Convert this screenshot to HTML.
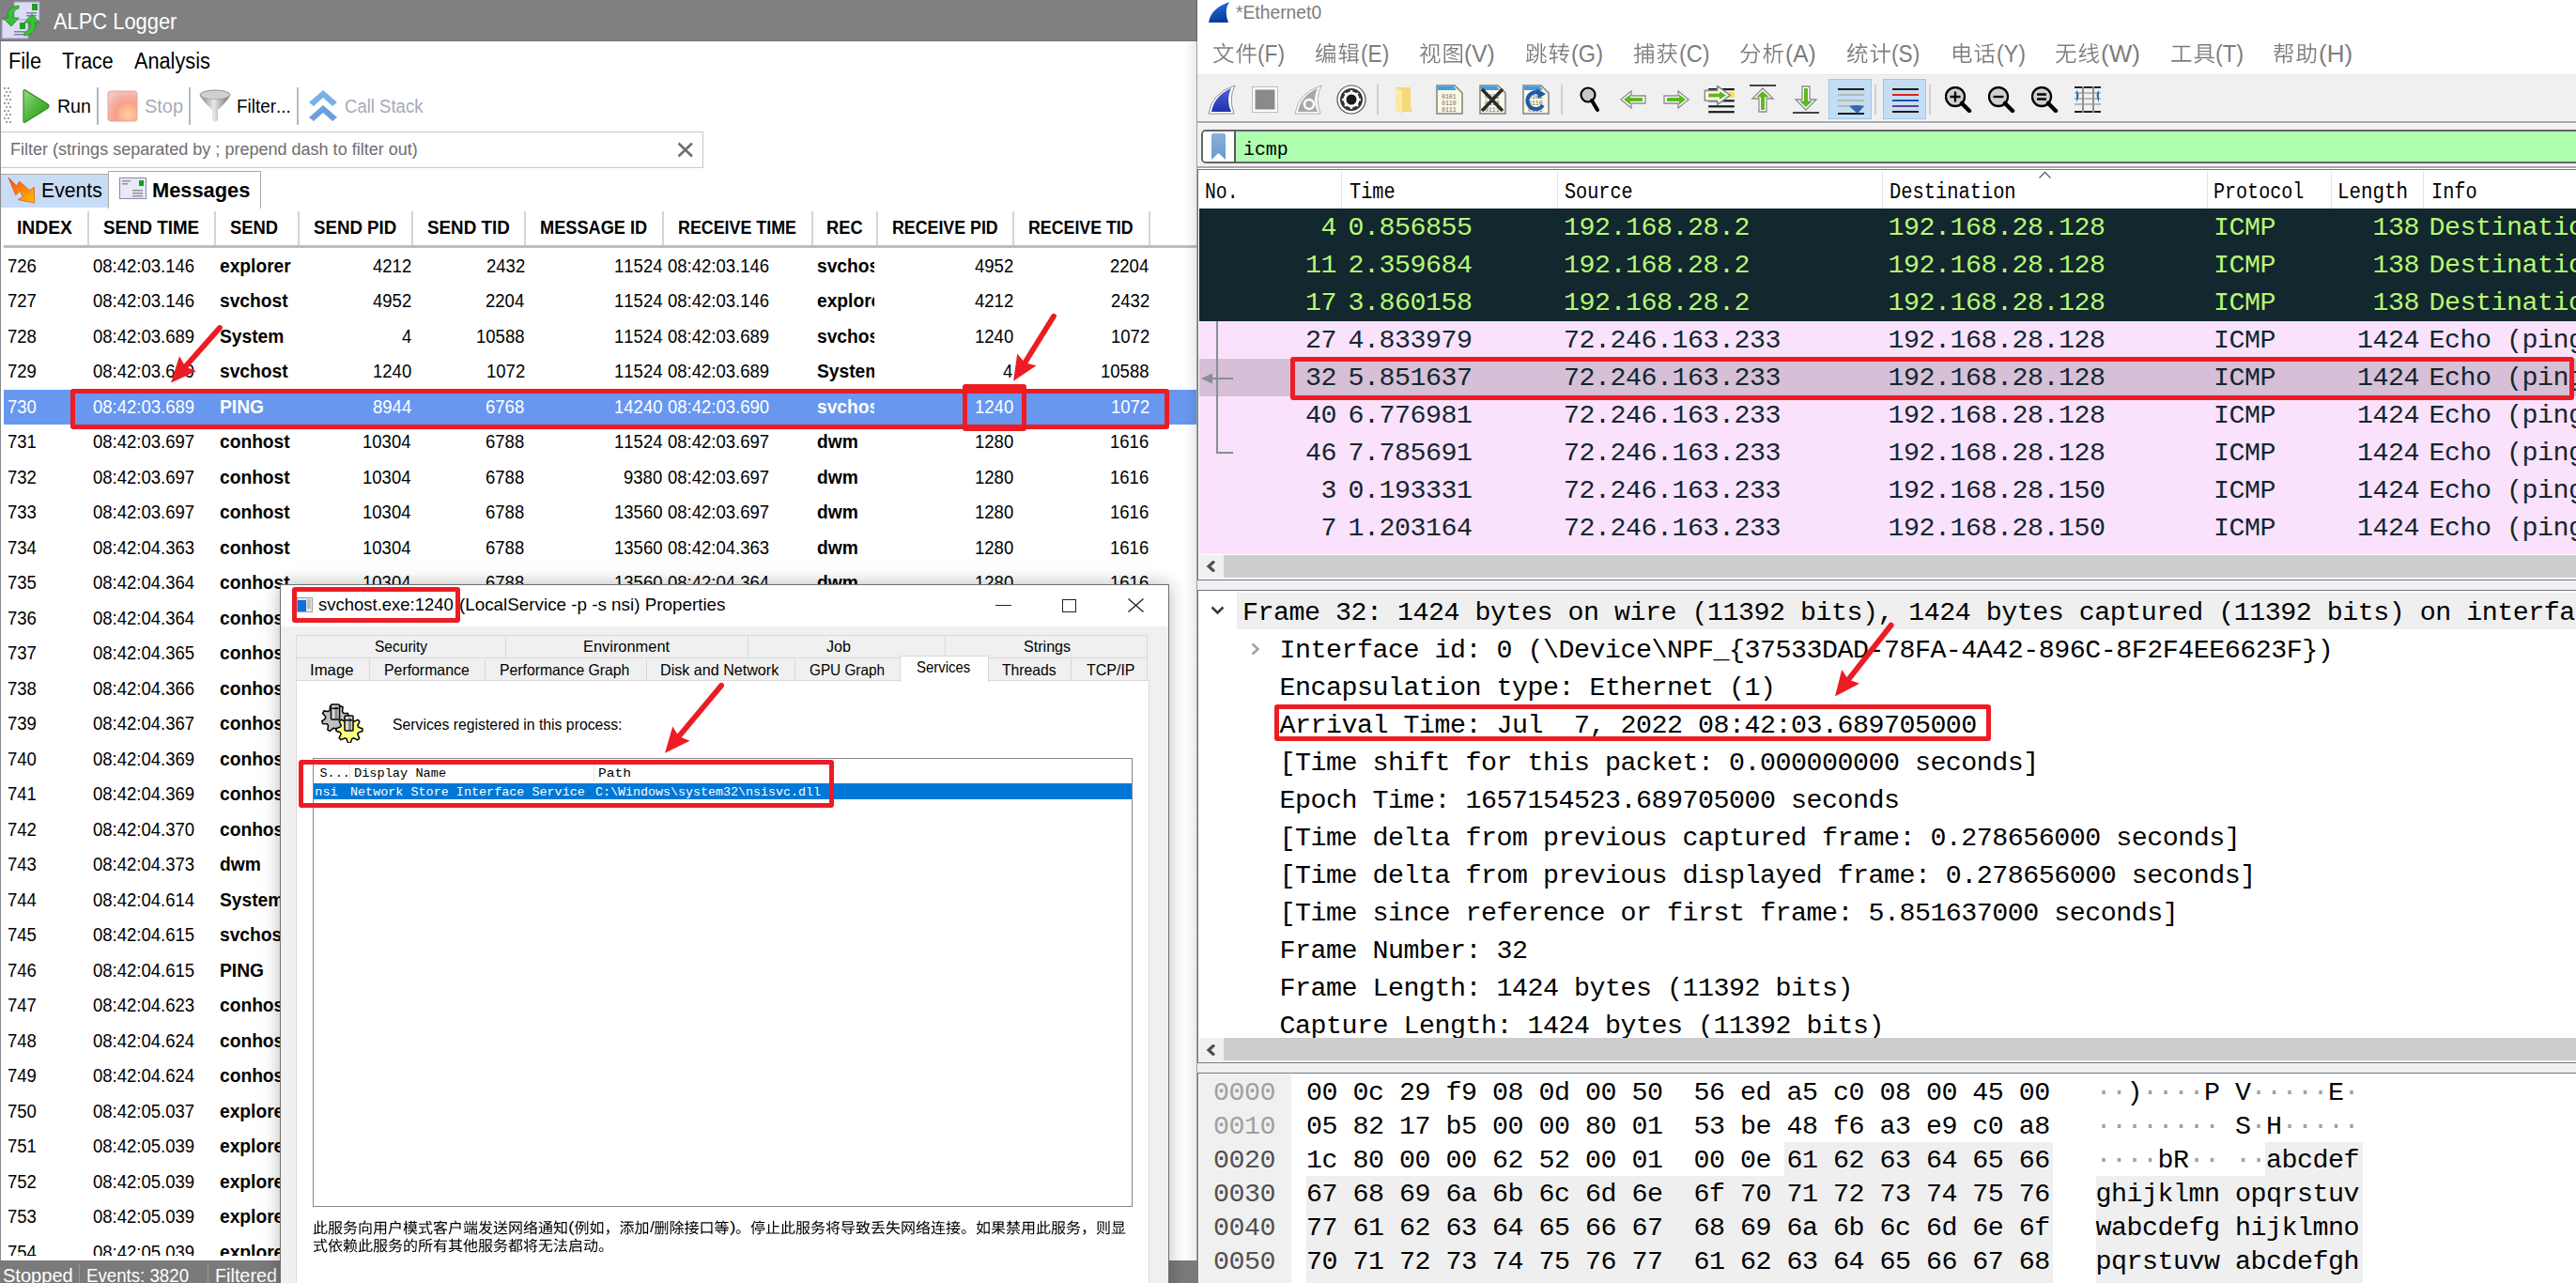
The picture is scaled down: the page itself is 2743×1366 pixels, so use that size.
<!DOCTYPE html><html><head><meta charset='utf-8'><style>
html,body{margin:0;padding:0;width:2743px;height:1366px;overflow:hidden;background:#fff}
body{position:relative;font-family:'Liberation Sans',sans-serif;color:#000}
.t{position:absolute;white-space:pre;line-height:1;transform-origin:0 0;font-kerning:none}
.r{position:absolute}
.c{position:absolute;overflow:hidden}
</style></head><body><svg width='0' height='0' style='position:absolute'><defs><path id='g0' d='M44 867 58 947C184 922 366 889 536 857L531 782L388 808V421H531V349H388V40H312V822L199 841V243H125V854ZM581 40V790C581 899 607 927 699 927C719 927 831 927 852 927C941 927 962 871 971 710C949 705 919 691 899 676C894 819 888 855 846 855C822 855 728 855 709 855C666 855 660 845 660 792V481C757 434 860 376 937 319L875 258C823 305 742 360 660 405V40Z'/><path id='g1' d='M108 77V436C108 584 102 785 34 926C52 932 82 949 95 961C141 866 161 740 170 621H329V869C329 884 323 888 310 888C297 889 255 889 209 888C219 908 228 941 230 960C298 960 338 959 364 946C390 934 399 911 399 870V77ZM176 147H329V311H176ZM176 381H329V550H174C175 510 176 471 176 436ZM858 489C836 573 801 649 758 714C711 647 675 571 648 489ZM487 80V960H558V489H583C615 593 659 689 716 770C670 826 617 869 562 899C578 912 598 937 606 954C661 922 713 879 759 826C806 882 860 928 921 961C933 943 954 917 970 903C907 873 851 827 802 771C865 682 914 569 941 433L897 417L884 420H558V150H839V273C839 285 836 288 820 289C804 290 751 290 690 288C700 306 711 332 714 352C790 352 841 352 872 342C904 331 912 311 912 274V80Z'/><path id='g2' d='M446 499C442 535 435 568 427 598H126V664H404C346 793 235 860 57 894C70 909 91 942 98 958C296 911 420 827 484 664H788C771 796 751 857 728 876C717 885 705 886 684 886C660 886 595 885 532 879C545 898 554 926 556 946C616 949 675 950 706 949C742 947 765 941 787 921C822 890 844 814 866 632C868 621 870 598 870 598H505C513 569 519 538 524 505ZM745 207C686 267 604 315 509 353C430 319 367 276 324 221L338 207ZM382 39C330 126 231 229 90 301C106 313 127 340 137 357C188 329 234 297 275 264C315 311 365 351 424 383C305 421 173 445 46 457C58 474 71 504 76 523C222 505 373 474 508 423C624 470 764 498 919 511C928 490 945 460 961 443C827 436 702 417 597 385C708 331 802 261 862 170L817 139L804 143H397C421 114 442 84 460 54Z'/><path id='g3' d='M438 38C424 89 399 159 374 213H99V960H173V286H832V860C832 878 826 884 806 884C785 885 716 886 644 882C655 904 666 939 670 960C762 960 824 959 860 947C895 934 907 910 907 860V213H457C482 165 509 107 531 53ZM373 486H626V682H373ZM304 419V822H373V750H696V419Z'/><path id='g4' d='M153 110V473C153 614 143 791 32 916C49 925 79 950 90 965C167 880 201 765 216 653H467V951H543V653H813V858C813 876 806 882 786 883C767 884 699 885 629 882C639 902 651 935 655 954C749 955 807 954 841 942C875 930 887 907 887 858V110ZM227 182H467V343H227ZM813 182V343H543V182ZM227 414H467V582H223C226 544 227 507 227 473ZM813 414V582H543V414Z'/><path id='g5' d='M247 265H769V466H246L247 413ZM441 54C461 98 483 154 495 195H169V413C169 564 156 772 34 921C52 929 85 952 99 966C197 846 232 680 243 536H769V602H845V195H528L574 181C562 142 537 81 513 35Z'/><path id='g6' d='M472 463H820V535H472ZM472 338H820V408H472ZM732 40V123H578V40H507V123H360V187H507V262H578V187H732V262H805V187H945V123H805V40ZM402 281V591H606C602 621 598 648 591 674H340V738H569C531 815 459 868 312 900C326 915 345 943 352 960C526 918 607 846 647 740C697 850 790 925 920 960C930 941 950 913 966 898C853 874 767 819 719 738H943V674H666C671 648 676 620 679 591H893V281ZM175 40V233H50V303H175V304C148 440 90 599 32 683C45 701 63 734 72 756C110 697 146 606 175 508V959H247V444C274 497 305 561 318 594L366 540C349 509 273 384 247 345V303H350V233H247V40Z'/><path id='g7' d='M709 89C761 125 823 179 853 215L905 168C875 133 811 82 760 47ZM565 44C565 106 567 167 570 227H55V300H575C601 672 685 962 849 962C926 962 954 911 967 736C946 728 918 711 901 694C894 828 883 884 855 884C756 884 678 639 653 300H947V227H649C646 168 645 107 645 44ZM59 856 83 930C211 902 395 860 565 820L559 752L345 798V522H532V449H90V522H270V813Z'/><path id='g8' d='M356 351H660C618 397 564 439 502 476C442 441 391 401 352 355ZM378 217C328 294 231 382 92 443C109 455 132 480 143 497C202 468 254 435 299 400C337 442 382 480 432 514C310 573 169 616 35 640C49 657 65 687 72 707C124 696 178 683 231 667V959H305V925H701V958H778V662C823 673 870 683 917 690C928 669 948 636 965 619C823 601 687 565 574 513C656 459 727 394 776 319L725 288L711 292H413C430 272 445 252 459 232ZM501 556C573 596 654 628 740 652H278C356 626 432 594 501 556ZM305 862V715H701V862ZM432 50C447 74 464 104 477 131H77V319H151V199H847V319H923V131H563C548 99 525 61 505 31Z'/><path id='g9' d='M50 228V298H387V228ZM82 356C104 469 122 616 126 715L186 704C182 605 163 460 140 346ZM150 70C175 116 204 179 216 219L283 196C270 156 241 96 214 50ZM407 560V959H475V625H563V950H623V625H715V948H775V625H868V890C868 899 865 902 856 902C848 903 823 903 795 902C803 919 813 944 816 962C861 962 888 961 909 950C930 940 934 923 934 891V560H676L704 469H957V401H376V469H620C615 499 608 532 602 560ZM419 90V328H922V90H850V262H699V42H627V262H489V90ZM290 337C278 458 254 634 230 743C160 760 94 775 44 785L61 860C155 836 276 805 394 775L385 705L289 729C313 622 338 468 355 349Z'/><path id='g10' d='M673 90C716 136 773 200 801 238L860 197C832 161 774 99 731 54ZM144 357C154 346 188 340 251 340H391C325 548 214 712 30 823C49 836 76 865 86 881C216 801 311 699 381 575C421 650 471 715 531 770C445 831 344 873 240 898C254 914 272 942 280 962C392 931 498 885 589 819C680 886 789 934 917 963C928 942 948 912 964 896C842 873 736 830 648 772C735 695 803 595 844 467L793 443L779 447H441C454 413 467 377 477 340H930L931 268H497C513 199 526 127 537 50L453 36C443 118 429 195 411 268H229C257 215 285 148 303 83L223 68C206 145 167 226 156 246C144 268 133 283 119 286C128 304 140 341 144 357ZM588 726C520 668 466 599 427 519H742C706 601 652 669 588 726Z'/><path id='g11' d='M410 68C441 117 478 184 495 224L562 194C543 156 504 91 473 43ZM78 87C131 143 195 221 225 270L288 228C257 180 191 105 138 51ZM788 40C765 96 726 173 691 227H352V296H587V412L586 441H319V511H578C558 598 499 692 325 763C342 777 366 804 376 820C524 753 597 669 632 585C715 663 807 755 855 813L909 761C853 698 742 595 654 514V511H946V441H662L663 413V296H916V227H768C800 178 835 118 864 65ZM248 379H49V449H176V763C131 779 79 827 25 889L80 961C127 891 173 828 204 828C225 828 260 864 302 892C374 938 459 948 590 948C691 948 878 942 949 938C950 914 963 875 972 854C871 865 716 874 593 874C475 874 387 867 320 825C288 805 266 786 248 774Z'/><path id='g12' d='M194 344C239 399 288 464 333 528C295 635 242 725 172 792C188 801 218 823 230 834C291 770 340 689 379 595C411 642 438 686 457 723L506 674C482 631 447 577 407 520C435 437 456 346 472 248L403 240C392 315 377 386 358 452C319 400 279 348 240 302ZM483 345C529 400 577 465 620 530C580 640 526 732 452 800C469 809 498 831 511 842C575 777 625 696 664 600C699 656 728 709 747 753L799 709C776 656 738 590 693 522C720 440 740 349 755 250L687 242C676 316 662 386 644 452C608 401 570 351 532 306ZM88 100V958H164V172H840V860C840 878 833 883 814 884C795 885 729 886 663 883C674 903 687 937 692 957C782 958 837 956 869 944C902 932 915 908 915 860V100Z'/><path id='g13' d='M41 830 59 905C151 875 274 838 391 802L380 737C254 773 126 809 41 830ZM570 27C529 135 460 239 383 310L392 295L326 254C308 289 287 325 266 359L138 372C198 288 257 181 302 78L230 44C189 162 116 290 92 324C71 357 53 380 34 384C43 404 56 442 60 457C74 450 98 444 220 428C176 491 136 542 118 561C87 598 63 622 42 626C50 646 62 682 66 698C88 684 122 673 369 614C366 598 365 568 367 548L182 588C250 510 317 416 376 322C390 336 412 365 421 378C452 349 483 314 512 275C541 324 579 369 623 410C548 460 462 498 374 524C385 539 401 573 407 593C502 562 596 516 679 456C753 512 841 557 935 587C939 567 952 536 964 519C879 496 801 460 733 414C814 345 880 261 923 161L879 133L866 136H598C613 107 627 77 639 47ZM466 584V951H536V901H820V949H892V584ZM536 834V651H820V834ZM823 204C787 268 737 323 677 371C625 326 582 274 552 216L560 204Z'/><path id='g14' d='M65 123C124 175 200 248 235 295L290 245C253 199 176 129 117 80ZM256 415H43V486H184V770C140 788 90 833 39 888L86 950C137 882 186 824 220 824C243 824 277 858 318 883C388 925 471 937 595 937C703 937 878 932 948 927C949 907 961 873 969 854C866 864 714 872 596 872C485 872 400 865 333 824C298 801 276 783 256 772ZM364 77V136H787C746 167 695 198 645 222C596 200 544 179 499 163L451 206C513 229 586 261 647 291H363V809H434V643H603V805H671V643H845V734C845 746 841 750 828 751C816 751 774 751 726 750C735 767 744 792 747 811C814 811 857 811 883 800C909 789 917 771 917 734V291H786C766 279 741 266 712 252C787 213 863 161 917 109L870 73L855 77ZM845 349V437H671V349ZM434 493H603V584H434ZM434 437V349H603V437ZM845 493V584H671V493Z'/><path id='g15' d='M547 127V931H620V852H832V920H908V127ZM620 781V198H832V781ZM157 39C134 162 92 281 33 358C50 369 81 390 94 402C124 359 152 304 175 244H252V408V444H45V516H247C234 649 186 793 34 901C49 912 77 942 86 957C201 875 262 768 294 660C348 722 427 817 461 866L512 802C482 768 360 631 312 584C317 561 320 538 322 516H515V444H326L327 409V244H486V174H199C211 135 221 95 230 54Z'/><path id='g16' d='M690 156V715H756V156ZM853 45V858C853 874 847 879 831 880C814 880 761 881 701 878C712 900 723 932 727 952C803 953 854 951 883 938C912 927 924 905 924 858V45ZM358 590C393 617 435 652 465 681C418 782 357 858 285 903C301 917 323 943 333 961C487 854 591 645 625 326L581 315L568 317H440C454 268 466 218 476 166H645V95H297V166H403C373 326 323 475 250 574C267 585 296 609 308 620C352 558 389 477 419 386H548C537 469 518 545 494 612C465 587 429 560 399 539ZM212 41C173 188 109 332 33 427C45 446 65 487 71 504C96 472 120 436 142 397V958H212V254C238 191 261 125 280 60Z'/><path id='g17' d='M399 315C384 454 353 568 307 657C265 624 220 590 178 560C199 489 221 403 241 315ZM95 588C151 627 212 675 269 722C211 807 137 864 47 899C63 914 82 943 93 961C187 919 265 859 326 772C367 809 402 845 427 875L478 813C451 782 412 744 367 706C426 594 464 446 479 251L432 243L418 245H256C270 176 282 108 291 46L216 41C209 104 197 174 183 245H47V315H168C146 418 119 516 95 588ZM532 148V935H604V859H849V919H924V148ZM604 788V219H849V788Z'/><path id='g18' d='M157 987C262 950 330 868 330 760C330 690 300 645 245 645C204 645 169 670 169 717C169 764 203 788 244 788L261 786C256 855 212 902 135 934Z'/><path id='g19' d='M407 591C384 667 342 754 280 805L335 846C400 788 441 694 466 614ZM643 626C672 693 701 781 709 840L770 817C760 760 732 673 699 607ZM766 599C823 675 883 780 907 849L970 817C944 748 884 647 825 571ZM533 483V877C533 889 529 893 515 893C502 893 459 894 409 892C418 913 427 940 430 960C497 960 541 959 568 948C595 937 603 917 603 878V483ZM85 103C143 132 213 179 246 213L291 152C256 119 186 76 129 49ZM38 374C98 400 170 443 205 475L248 414C212 382 140 343 79 319ZM60 905 127 947C171 858 221 741 259 641L199 599C157 707 100 831 60 905ZM327 97V167H548C537 213 522 258 503 301H281V372H466C416 453 347 523 254 569C268 583 290 610 300 626C414 567 494 477 550 372H676C732 472 826 564 922 610C933 592 956 566 971 552C888 517 807 449 754 372H954V301H584C601 258 615 213 627 167H920V97Z'/><path id='g20' d='M572 164V945H644V871H838V937H913V164ZM644 799V237H838V799ZM195 53 194 230H53V303H192C185 555 154 777 28 909C47 921 74 944 86 961C221 814 256 574 265 303H417C409 688 400 825 379 854C370 867 360 871 345 870C327 870 284 870 237 866C250 887 257 919 259 941C304 944 350 945 378 941C407 937 426 928 444 902C475 859 482 713 490 268C490 257 490 230 490 230H267L269 53Z'/><path id='g21' d='M709 151V716H770V151ZM854 57V875C854 890 849 894 836 894C823 894 781 895 733 893C743 912 753 942 755 960C819 960 860 958 885 947C910 936 920 916 920 875V57ZM44 430V499H108V549C108 673 103 821 39 923C55 930 82 949 94 961C162 853 171 681 171 548V499H264V868C264 879 260 883 250 883C239 883 207 884 171 883C180 900 188 931 190 949C243 949 277 947 298 935C320 924 327 903 327 869V499H397V506C397 638 393 809 337 926C352 933 380 949 392 959C452 836 460 645 460 505V499H553V868C553 880 549 883 539 884C528 884 496 884 460 883C469 901 477 931 479 949C533 949 566 947 587 936C609 924 616 904 616 869V499H668V430H616V72H397V430H327V72H108V430ZM171 139H264V430H171ZM460 139H553V430H460Z'/><path id='g22' d='M474 659C440 731 389 806 336 858C353 868 382 888 394 899C445 844 502 758 541 678ZM764 680C817 744 879 833 907 890L967 855C938 799 877 714 820 651ZM78 80V957H145V148H274C250 215 219 304 189 375C266 454 285 522 285 577C285 609 279 636 262 647C254 654 243 656 229 657C213 658 191 658 167 655C178 675 184 703 185 722C209 723 236 723 257 721C278 718 297 712 311 701C340 681 352 639 352 584C351 522 333 450 256 367C292 288 331 189 362 106L314 77L303 80ZM371 535V604H634V873C634 886 630 891 614 891C600 892 551 892 495 890C507 910 517 939 521 959C593 959 639 958 668 946C697 935 706 914 706 873V604H954V535H706V413H860V347H465V413H634V535ZM661 33C595 153 470 269 344 334C362 348 383 371 394 388C493 331 590 246 664 150C749 256 835 323 924 379C935 358 957 334 975 319C882 269 789 202 702 96L725 58Z'/><path id='g23' d='M456 245C485 285 515 341 528 376L588 348C575 314 543 261 513 221ZM160 41V242H41V312H160V533C110 548 64 562 28 571L47 645L160 608V871C160 884 155 888 143 888C132 888 96 888 57 887C66 907 76 939 78 957C136 958 173 955 196 943C220 931 230 911 230 870V585L329 553L319 483L230 511V312H330V242H230V41ZM568 59C584 85 601 116 614 145H383V211H926V145H693C678 114 657 77 637 48ZM769 222C751 269 714 335 684 379H348V444H952V379H758C785 340 814 289 840 243ZM765 619C745 682 715 732 671 772C615 749 558 729 504 712C523 684 544 652 564 619ZM400 744C465 764 537 789 606 818C536 857 442 881 320 894C333 909 345 937 352 958C496 937 604 904 682 851C764 888 837 927 886 962L935 905C886 871 817 836 741 802C788 754 820 694 840 619H963V554H601C618 523 633 492 646 462L576 449C562 482 544 518 524 554H335V619H486C457 665 427 709 400 744Z'/><path id='g24' d='M127 145V935H205V850H796V931H876V145ZM205 773V220H796V773Z'/><path id='g25' d='M578 35C549 120 495 200 433 252L460 269V338H147V401H460V491H48V557H665V645H80V711H665V870C665 884 660 888 642 889C624 890 565 890 497 888C508 908 521 938 525 959C607 959 663 958 697 948C731 936 741 915 741 871V711H929V645H741V557H956V491H537V401H861V338H537V269H521C543 245 564 218 583 188H651C681 227 710 274 722 307L787 279C776 253 755 220 732 188H945V124H619C631 101 641 77 650 52ZM223 754C288 797 360 861 393 908L451 861C417 814 343 752 278 711ZM186 35C152 124 96 211 33 270C51 279 82 300 96 312C129 279 161 236 191 188H231C250 227 268 272 274 302L341 277C335 254 321 220 306 188H488V124H226C237 101 248 78 257 54Z'/><path id='g26' d='M194 636C111 636 42 704 42 788C42 873 111 941 194 941C279 941 347 873 347 788C347 704 279 636 194 636ZM194 890C139 890 93 845 93 788C93 733 139 687 194 687C251 687 296 733 296 788C296 845 251 890 194 890Z'/><path id='g27' d='M467 302H795V386H467ZM398 248V440H867V248ZM309 503V666H375V565H883V666H951V503ZM564 55C578 77 592 105 603 130H325V194H951V130H684C672 101 651 63 632 35ZM398 640V701H594V875C594 887 590 891 574 892C559 892 503 892 443 891C453 910 463 936 467 956C545 956 596 956 629 947C661 936 669 916 669 877V701H860V640ZM263 42C211 193 124 343 32 441C45 458 66 497 74 515C103 483 132 446 159 405V959H228V292C268 219 303 141 332 63Z'/><path id='g28' d='M188 261V836H49V910H949V836H577V450H905V375H577V43H499V836H265V261Z'/><path id='g29' d='M421 661C473 715 529 791 552 842L617 804C592 753 535 680 482 628ZM755 405V529H350V599H755V870C755 884 750 888 734 889C717 890 660 890 600 888C610 909 621 939 624 959C703 959 756 958 787 947C820 935 829 914 829 871V599H950V529H829V405ZM44 216C95 267 153 338 178 386L230 342V515C159 580 87 642 39 681L80 744C126 703 178 654 230 604V959H303V40H230V332C202 286 145 222 96 175ZM505 270C539 298 575 337 597 368C523 404 440 430 359 446C373 461 388 488 396 506C616 456 837 346 932 143L883 117L870 120H654C672 101 689 82 703 62L627 40C572 120 466 202 351 250C366 262 390 285 400 299C466 268 530 228 586 182H827C786 243 727 294 658 335C635 303 595 265 560 237Z'/><path id='g30' d='M211 698C274 750 345 827 374 879L430 829C399 780 331 710 270 659H648V869C648 884 642 889 622 890C603 890 531 891 457 889C468 908 480 936 484 956C580 956 641 956 677 945C713 935 725 915 725 871V659H944V589H725V511H648V589H62V659H256ZM135 110V372C135 466 185 486 350 486C387 486 709 486 749 486C875 486 908 462 921 359C898 356 868 347 848 336C840 410 826 424 744 424C674 424 397 424 344 424C233 424 213 413 213 371V318H826V80H135ZM213 146H752V251H213Z'/><path id='g31' d='M76 439C98 430 134 425 405 400C414 417 421 433 427 447L488 414C465 363 413 281 369 220L312 248C331 276 352 308 371 340L157 357C196 304 235 240 268 173H498V104H51V173H184C152 243 113 306 98 326C82 350 67 366 52 369C60 388 72 423 76 439ZM38 830 50 906C172 884 346 854 509 824L506 753L313 786V636H487V567H313V453H239V567H66V636H239V798ZM621 296H807C789 428 762 538 717 630C670 538 636 431 614 316ZM611 39C580 211 524 377 443 484C459 497 487 526 499 541C524 506 547 467 569 423C595 527 629 622 674 704C618 785 544 847 443 894C457 910 480 944 487 961C583 912 658 850 716 773C769 851 835 913 917 956C928 937 951 907 969 893C884 853 815 788 761 705C823 597 861 462 885 296H955V226H644C660 170 674 111 686 52Z'/><path id='g32' d='M815 46C653 85 357 107 112 115C121 133 130 165 131 184C236 182 350 177 461 168V293H141V364H461V498H58V569H385C317 669 226 765 196 791C166 820 143 840 121 843C129 864 142 902 146 918C184 904 239 900 790 857C814 893 833 928 846 956L921 922C880 838 787 714 703 624L635 653C672 695 711 744 746 793L263 826C336 758 409 672 475 584L438 569H941V498H537V364H859V293H537V162C662 150 780 133 872 111Z'/><path id='g33' d='M456 40V215H264C283 169 300 120 314 70L236 54C200 190 138 324 60 409C79 417 116 437 132 448C167 405 200 351 230 291H456V351C456 397 454 444 446 490H54V565H429C387 695 285 814 42 896C58 911 80 943 89 961C345 873 456 742 502 598C580 784 712 906 921 960C932 940 954 908 971 892C767 846 635 734 566 565H947V490H526C532 444 534 397 534 351V291H863V215H534V40Z'/><path id='g34' d='M83 88C134 145 196 222 223 271L285 229C255 181 193 105 141 51ZM248 379H45V449H176V763C133 781 82 828 30 889L86 962C132 892 177 828 208 828C230 828 264 864 306 892C378 938 463 949 593 949C694 949 879 943 950 938C952 915 964 875 974 854C873 865 720 874 596 874C479 874 391 867 325 824C290 802 267 782 248 770ZM376 472C385 463 420 457 468 457H622V594H316V664H622V848H699V664H941V594H699V457H893L894 387H699V264H622V387H458C488 335 517 274 545 210H923V144H571L602 61L524 40C515 75 503 110 490 144H324V210H464C440 268 417 315 406 334C386 370 369 395 352 399C360 419 373 456 376 472Z'/><path id='g35' d='M159 88V486H461V571H62V640H400C310 736 167 822 36 865C53 881 76 908 88 927C220 877 364 782 461 672V960H540V667C639 774 785 871 914 922C925 903 949 875 965 859C839 817 694 732 601 640H939V571H540V486H848V88ZM236 317H461V421H236ZM540 317H767V421H540ZM236 153H461V255H236ZM540 153H767V255H540Z'/><path id='g36' d='M661 772C734 823 823 898 865 946L927 905C882 857 791 785 719 736ZM180 491V555H835V491ZM248 738C203 800 128 860 54 900C72 911 100 934 114 947C186 903 267 832 318 760ZM242 39V141H74V204H219C174 281 103 358 37 397C52 409 73 432 84 449C140 410 197 345 242 275V456H312V278C354 310 404 352 427 373L468 322C443 303 350 237 312 214V204H451V141H312V39ZM65 635V700H466V879C466 891 462 895 446 896C429 897 373 897 311 895C321 915 332 941 336 961C415 961 467 961 499 950C532 940 542 921 542 880V700H938V635ZM676 39V141H498V204H649C601 279 525 354 454 391C469 403 490 427 500 443C562 404 627 338 676 266V456H747V270C795 338 857 405 910 443C921 427 943 403 958 391C892 352 816 277 768 204H924V141H747V39Z'/><path id='g37' d='M322 766C385 817 465 890 503 935L551 880C512 837 431 768 369 719ZM103 94V701H173V162H462V698H535V94ZM834 47V854C834 873 826 879 807 879C788 880 725 881 654 878C666 900 678 933 682 955C774 955 829 953 863 941C894 928 908 905 908 854V47ZM647 130V729H718V130ZM280 230V514C280 651 255 802 45 905C59 917 83 945 91 961C315 852 351 669 351 516V230Z'/><path id='g38' d='M244 310H757V414H244ZM244 149H757V252H244ZM171 89V475H833V89ZM820 550C787 614 727 700 682 754L740 783C786 729 842 650 885 580ZM124 583C165 647 213 735 236 787L297 757C275 706 224 620 183 558ZM571 515V841H423V515H352V841H40V913H960V841H643V515Z'/><path id='g39' d='M546 66C574 116 604 184 616 225L687 198C674 158 642 93 613 44ZM401 963C422 947 453 932 675 851C670 835 665 805 663 786L484 849V489C518 453 550 415 579 376C643 616 753 826 916 932C929 912 954 884 971 870C878 816 801 724 741 611C808 566 890 503 953 447L897 395C851 444 777 509 714 556C678 477 649 391 628 302L631 298H944V227H297V298H545C467 418 353 526 237 596C253 610 279 641 290 657C330 629 371 597 411 561V820C411 866 380 894 361 906C374 919 394 947 401 963ZM266 41C213 193 126 342 32 440C46 458 68 497 75 514C104 483 133 447 160 407V961H232V292C273 219 309 141 338 63Z'/><path id='g40' d='M686 415C683 727 669 845 446 912C460 923 477 948 483 962C723 887 746 748 750 415ZM723 808C792 852 880 915 923 956L967 907C922 867 832 806 765 765ZM84 314V595H217C176 682 109 772 47 821C59 840 76 871 83 892C140 841 198 756 242 668V956H312V668C357 715 402 767 427 804L475 757C444 714 380 647 325 595H463V314H311V216H484V150H311V47H242V150H56V216H242V314ZM149 375H248V535H149ZM305 375H397V535H305ZM644 181H793C774 224 750 271 726 305H569C597 265 622 223 644 181ZM635 40C605 123 551 233 474 318C491 325 515 340 529 353V752H595V362H838V750H906V305H795C826 257 858 197 880 144L835 116L825 119H674L703 51Z'/><path id='g41' d='M552 457C607 530 675 630 705 691L769 651C736 592 667 495 610 424ZM240 38C232 86 215 152 199 201H87V934H156V855H435V201H268C285 158 304 102 321 52ZM156 268H366V479H156ZM156 787V545H366V787ZM598 36C566 174 512 312 443 401C461 411 492 432 506 444C540 396 572 335 600 267H856C844 668 828 822 796 856C784 870 773 873 753 873C730 873 670 872 604 867C618 886 627 918 629 939C685 942 744 944 778 941C814 937 836 929 859 899C899 850 913 695 928 236C929 226 929 198 929 198H627C643 151 658 101 670 52Z'/><path id='g42' d='M534 141V474C534 613 523 789 404 912C420 922 451 947 462 962C591 832 611 625 611 474V451H766V957H841V451H958V379H611V196C726 178 854 152 939 116L888 52C806 90 659 122 534 141ZM172 519V489V359H370V519ZM441 61C362 97 218 124 98 139V489C98 619 93 792 29 914C45 923 77 948 90 962C147 858 165 713 170 587H442V291H172V195C284 181 408 159 489 124Z'/><path id='g43' d='M391 40C379 83 365 127 347 170H63V240H316C252 372 160 494 40 576C54 590 78 617 88 634C151 589 207 535 255 474V959H329V761H748V865C748 880 743 886 726 886C707 887 646 888 580 885C590 906 601 937 605 957C691 957 746 957 779 946C812 933 822 910 822 866V356H336C359 318 379 280 397 240H939V170H427C442 133 455 95 467 58ZM329 591H748V696H329ZM329 527V424H748V527Z'/><path id='g44' d='M573 815C691 859 810 913 880 956L949 906C871 865 743 809 625 768ZM361 762C291 811 153 869 45 901C61 916 83 942 94 958C202 923 339 865 428 809ZM686 41V157H313V41H239V157H83V227H239V675H54V745H946V675H761V227H922V157H761V41ZM313 675V565H686V675ZM313 227H686V327H313ZM313 392H686V501H313Z'/><path id='g45' d='M398 140V404L271 453L300 520L398 482V808C398 918 433 947 554 947C581 947 787 947 815 947C926 947 951 902 963 763C941 758 911 745 893 733C885 851 875 878 813 878C769 878 591 878 556 878C485 878 472 866 472 808V453L620 395V737H691V368L847 307C846 464 844 568 837 595C830 621 820 625 802 625C790 625 753 626 726 624C735 642 742 672 744 694C775 695 818 694 846 687C877 679 898 660 906 614C915 571 918 427 918 245L922 232L870 211L856 222L847 230L691 290V42H620V318L472 375V140ZM266 44C210 196 117 346 18 443C32 460 53 498 60 515C94 479 128 438 160 393V958H234V277C273 209 308 137 336 65Z'/><path id='g46' d='M508 74C488 122 465 167 439 210V156H313V48H243V156H89V223H243V343H43V410H283C206 486 118 549 21 597C35 611 59 642 68 658C96 643 123 627 149 609V955H217V896H443V941H515V507H281C315 477 347 444 377 410H560V343H431C488 268 536 185 576 95ZM313 223H431C405 265 376 305 344 343H313ZM217 833V727H443V833ZM217 667V569H443V667ZM603 97V960H677V168H864C831 248 786 356 741 441C846 528 878 604 878 668C879 704 871 733 848 747C835 754 819 758 801 758C779 760 749 759 716 756C729 777 737 809 738 830C770 832 805 832 832 829C858 826 881 818 900 806C936 783 951 736 951 674C951 603 924 524 818 431C867 338 922 223 963 128L909 94L897 97Z'/><path id='g47' d='M114 107V181H446C443 252 440 328 428 403H52V476H414C373 648 276 809 39 899C58 914 80 941 90 960C348 857 448 672 490 476H511V820C511 911 539 937 643 937C664 937 807 937 830 937C926 937 950 895 960 735C938 730 905 717 887 703C882 840 874 863 825 863C794 863 674 863 650 863C599 863 589 856 589 820V476H951V403H503C514 328 519 253 521 181H894V107Z'/><path id='g48' d='M95 105C162 135 244 183 285 218L328 155C286 122 202 77 137 51ZM42 377C107 405 187 452 227 485L269 423C228 390 146 347 83 321ZM76 896 139 947C198 854 268 729 321 623L266 574C208 687 129 819 76 896ZM386 925C413 913 455 906 829 859C849 896 865 931 875 959L941 925C911 847 835 728 764 640L704 669C734 708 765 753 793 798L476 833C538 749 601 642 653 535H937V464H673V283H896V212H673V40H598V212H383V283H598V464H339V535H563C513 648 446 755 424 785C399 822 380 845 360 850C369 871 382 909 386 925Z'/><path id='g49' d='M276 569V955H349V891H810V953H887V569ZM349 823V639H810V823ZM436 59C457 97 482 147 495 183H154V424C154 570 143 769 36 911C53 920 85 947 97 962C203 822 227 616 230 462H869V183H541L575 172C562 136 534 80 507 39ZM230 253H793V392H230Z'/><path id='g50' d='M89 122V189H476V122ZM653 57C653 128 653 200 650 271H507V343H647C635 571 595 780 458 905C478 916 504 941 517 959C664 819 707 591 721 343H870C859 698 846 831 819 861C809 873 798 876 780 876C759 876 706 876 650 870C663 892 671 923 673 944C726 948 781 948 812 945C844 942 864 933 884 907C919 863 931 721 945 309C945 298 945 271 945 271H724C726 200 727 128 727 57ZM89 836 90 835V837C113 823 149 812 427 749L446 816L512 794C493 724 448 605 410 515L348 532C368 579 388 634 406 686L168 736C207 646 245 534 270 429H494V360H54V429H193C167 546 125 664 111 697C94 735 81 762 65 767C74 785 85 821 89 836Z'/><path id='g51' d='M425 57C456 106 489 173 502 214L575 190C560 149 525 83 494 36ZM51 220V285H207C266 438 347 572 452 680C342 775 205 844 38 893C52 908 73 940 80 956C249 901 388 828 502 728C616 830 754 906 919 952C930 933 950 905 965 890C804 849 666 776 554 680C656 575 735 446 795 285H953V220ZM503 633C405 535 330 418 276 285H718C666 425 595 540 503 633Z'/><path id='g52' d='M317 543V609H607V958H674V609H950V543H674V314H907V248H674V54H607V248H464C477 202 489 153 499 104L434 91C411 223 369 352 311 437C327 444 355 461 368 470C396 427 421 374 442 314H607V543ZM272 45C218 198 129 350 34 448C47 464 67 498 73 514C107 477 140 435 171 388V956H235V284C274 214 308 139 336 65Z'/><path id='g53' d='M42 829 59 891C140 858 245 817 346 776L334 721C225 762 116 804 42 829ZM61 456C75 449 98 443 212 428C172 494 134 547 118 568C89 605 67 632 47 635C55 652 65 682 68 696C86 684 116 675 338 623C336 610 333 586 334 568L159 605C232 512 303 396 362 283L306 252C289 291 268 330 247 367L129 380C186 292 242 176 285 65L220 42C183 164 115 296 94 330C73 365 57 389 40 393C48 410 58 442 61 456ZM623 526V681H534V526ZM670 526H747V681H670ZM480 470V950H534V735H623V925H670V735H747V924H794V735H874V890C874 898 871 900 864 901C857 901 837 901 814 900C821 914 828 936 830 951C866 951 889 950 907 941C924 932 928 917 928 891V469L874 470ZM794 526H874V681H794ZM608 54C624 84 642 120 653 151H416V368C416 521 407 742 317 903C331 910 358 929 369 941C461 777 477 541 478 379H919V151H724C714 118 692 71 670 36ZM478 208H856V323H478Z'/><path id='g54' d='M547 126H825V234H547ZM485 74V286H890V74ZM82 545C91 537 120 531 154 531H247V680C169 695 97 707 42 716L57 782L247 743V954H309V731L428 706L424 647L309 669V531H406V469H309V314H247V469H144C173 398 201 314 225 226H412V162H242C251 127 258 91 265 56L199 42C193 82 186 123 177 162H49V226H162C141 309 118 378 108 403C91 447 78 480 62 484C69 501 79 531 82 545ZM822 405V496H557V405ZM400 808 411 869 822 837V958H884V832L958 826L959 769L884 774V405H953V347H425V405H494V802ZM822 548V641H557V548ZM822 693V779L557 798V693Z'/><path id='g55' d='M454 91V623H518V151H836V623H903V91ZM158 74C195 113 234 168 252 205L306 169C288 133 248 81 209 44ZM640 229V431C640 588 609 778 357 909C371 920 392 945 399 959C556 877 634 766 672 653V862C672 926 698 943 764 943H859C943 943 954 903 963 746C945 742 923 733 906 719C901 864 897 891 860 891H773C743 891 735 884 735 855V604H686C700 545 704 487 704 433V229ZM65 214V276H314C254 406 145 534 41 606C52 618 68 651 74 670C114 640 155 602 195 558V958H258V519C295 565 341 626 362 657L405 603C386 581 314 498 276 458C325 389 367 314 395 236L359 212L347 214Z'/><path id='g56' d='M378 599C458 616 559 651 614 678L642 632C587 606 486 573 407 557ZM277 726C415 743 588 783 683 817L713 766C616 734 443 695 308 679ZM86 87V958H151V915H847V958H915V87ZM151 855V148H847V855ZM416 172C365 255 278 334 193 386C207 395 230 415 240 426C272 405 305 379 337 350C369 385 408 417 452 445C364 488 265 519 174 537C186 550 200 576 206 592C305 569 413 531 509 479C593 525 690 560 786 581C794 564 811 542 823 530C733 513 642 485 563 447C638 398 702 340 744 272L706 249L695 252H429C445 232 459 212 472 192ZM375 313 383 305H650C613 347 563 384 506 417C454 386 408 352 375 313Z'/><path id='g57' d='M145 151H316V337H145ZM393 197C435 264 471 353 482 413L540 388C527 328 490 240 445 174ZM888 167C861 236 811 334 773 394L822 420C862 362 911 271 950 198ZM37 832 52 894C148 869 278 835 402 803L395 745L268 776V586H379V527H268V395H375V93H88V395H211V791L143 807V477H91V820ZM705 41V838C705 922 722 943 787 943C801 943 872 943 886 943C945 943 961 903 967 792C949 788 925 777 910 764C907 856 903 881 883 881C868 881 808 881 796 881C772 881 768 875 768 838V558C826 606 889 664 921 702L966 655C927 611 845 542 782 494L768 507V41ZM551 41V465L550 530C480 577 409 623 361 651L399 710C444 677 495 638 546 599C533 721 491 845 351 911C365 924 385 947 394 961C596 852 612 641 612 464V41Z'/><path id='g58' d='M82 545C91 537 120 531 155 531H247V681L42 716L57 782L247 745V954H311V732L450 704L447 645L311 670V531H419V469H311V314H247V469H142C174 398 206 312 233 223H415V161H251C260 126 269 91 277 56L211 42C205 81 196 122 186 161H48V223H170C146 308 121 378 111 404C93 447 78 481 62 485C70 501 79 531 82 545ZM426 349V412H578C556 482 535 547 517 598H809C773 650 727 713 683 770C649 747 613 724 579 704L537 747C637 808 754 900 812 959L856 906C827 877 783 842 734 806C798 723 867 627 916 554L868 531L858 535H610L647 412H957V349H665L700 224H921V161H717L746 51L679 42L649 161H465V224H632L596 349Z'/><path id='g59' d='M624 42V192H372V255H624V357H401V957H463V749H624V949H687V749H861V886C861 899 858 903 846 903C833 903 793 904 746 902C754 918 761 942 764 957C827 958 869 958 893 948C917 938 925 921 925 887V357H687V255H947V192H687V42ZM731 95C785 124 857 166 893 192L927 143C889 119 817 80 764 53ZM861 418V524H687V418ZM624 418V524H463V418ZM463 581H624V691H463ZM861 581V691H687V581ZM185 42V245H43V308H185V533L30 577L45 643L185 600V879C185 893 179 898 166 898C154 898 112 898 66 897C74 915 84 942 86 958C152 959 191 957 216 946C241 936 250 917 250 878V579L375 539L366 479L250 514V308H365V245H250V42Z'/><path id='g60' d='M707 326C761 362 821 415 850 454L897 416C868 378 806 326 753 293ZM610 284V431L609 472H370V534H604C587 660 529 804 344 917C360 929 382 946 394 961C550 865 620 746 650 630C702 780 784 894 907 957C916 940 936 915 952 903C811 841 724 705 680 534H941V472H672L673 431V284ZM636 41V123H370V41H304V123H64V184H304V269H370V184H636V265H702V184H941V123H702V41ZM329 292C307 317 279 343 247 368C220 336 185 306 141 276L97 312C140 341 173 372 198 403C150 436 96 465 43 488C56 499 74 519 84 532C133 509 184 482 230 451C248 483 260 516 267 549C218 619 121 694 41 729C55 741 73 763 82 780C148 744 222 684 277 624L278 670C278 773 270 846 245 876C237 886 228 891 214 892C192 895 154 895 109 892C121 909 130 934 131 952C170 954 207 954 239 949C261 946 279 936 291 921C330 875 341 788 341 673C341 584 332 497 282 415C321 386 356 354 384 322Z'/><path id='g61' d='M327 63C268 216 166 356 46 442C63 454 91 479 103 493C222 398 331 250 398 83ZM670 61 609 86C679 233 800 396 905 484C918 466 942 441 959 428C855 351 733 197 670 61ZM186 422V488H384C361 662 304 826 66 905C81 919 99 944 108 961C362 870 428 687 454 488H739C726 746 710 847 685 873C675 882 663 885 642 885C618 885 555 884 488 878C500 897 508 925 510 945C574 949 636 950 670 947C703 946 725 938 745 915C780 877 794 763 809 455C810 446 810 422 810 422Z'/><path id='g62' d='M483 152V462C483 602 473 788 383 922C399 928 427 946 438 956C532 818 547 610 547 462V449H739V958H805V449H954V385H547V198C669 176 803 144 896 105L838 53C756 90 610 127 483 152ZM214 41V258H61V322H206C173 463 103 623 34 709C46 724 63 751 70 769C123 699 175 584 214 467V957H279V461C315 514 358 582 375 616L419 562C399 533 313 418 279 376V322H429V258H279V41Z'/><path id='g63' d='M702 527V849C702 918 718 937 784 937C797 937 861 937 875 937C935 937 951 901 956 769C938 764 911 754 898 741C895 860 891 878 868 878C855 878 804 878 794 878C771 878 767 875 767 849V527ZM513 528C507 732 482 839 317 900C332 912 350 937 358 953C539 882 571 755 579 528ZM43 830 59 896C147 868 264 833 376 798L366 739C245 774 124 809 43 830ZM597 56C619 99 644 155 655 189H409V250H592C548 313 475 411 451 434C433 451 408 458 389 463C397 477 410 512 413 529C439 517 480 513 846 478C864 506 879 531 889 552L946 520C915 463 850 369 796 299L743 326C766 356 790 390 813 425L524 449C569 393 630 311 672 250H946V189H658L721 169C709 137 682 81 659 40ZM60 456C74 448 98 442 225 425C180 491 138 544 120 563C88 601 64 626 43 630C52 648 62 681 66 696C86 683 119 673 368 619C366 605 365 578 366 560L169 599C247 509 325 398 391 287L330 251C311 288 289 326 266 362L134 376C198 290 260 178 308 70L240 39C195 160 119 291 95 324C72 358 53 382 35 386C44 405 56 441 60 456Z'/><path id='g64' d='M141 103C197 150 266 218 298 261L343 211C310 169 240 105 185 60ZM48 357V423H209V792C209 835 178 863 160 875C173 889 191 919 197 936C212 916 239 896 425 764C419 751 407 724 403 705L276 791V357ZM629 44V377H373V445H629V958H699V445H958V377H699V44Z'/><path id='g65' d='M456 467V620H198V467ZM526 467H795V620H526ZM456 404H198V253H456ZM526 404V253H795V404ZM129 187V748H198V686H456V801C456 912 488 940 595 940C620 940 796 940 822 940C926 940 948 888 960 737C939 732 910 720 893 707C886 838 876 872 819 872C782 872 629 872 598 872C538 872 526 860 526 802V686H863V187H526V43H456V187Z'/><path id='g66' d='M103 111C153 155 216 219 245 258L292 210C260 172 197 112 146 70ZM417 587V958H484V917H828V954H897V587H690V415H957V351H690V152C769 138 843 121 902 102L855 49C742 87 537 119 364 137C372 152 381 177 384 193C460 186 543 176 623 163V351H367V415H623V587ZM484 855V649H828V855ZM45 357V421H188V780C188 827 154 862 136 875C148 888 168 914 175 929C190 909 216 889 384 759C377 746 364 720 358 704L252 782V357Z'/><path id='g67' d='M116 109V175H451C448 249 445 328 432 407H54V473H419C378 649 281 814 41 904C58 918 77 942 87 959C344 857 445 670 487 473H513V826C513 912 539 935 639 935C660 935 811 935 833 935C927 935 948 894 958 736C938 732 909 720 893 708C888 846 880 870 829 870C797 870 669 870 645 870C592 870 582 863 582 826V473H949V407H499C511 328 515 250 518 175H892V109Z'/><path id='g68' d='M55 829 69 893C160 866 281 832 396 799L387 741C264 775 137 809 55 829ZM704 99C756 123 819 161 852 189L891 147C858 120 793 83 743 62ZM72 456C85 448 109 442 236 426C191 493 150 546 131 566C101 604 77 630 56 633C64 650 74 682 78 696C97 684 130 675 382 623C380 610 380 584 382 567L174 605C253 514 331 400 396 287L340 253C321 291 299 329 276 365L142 379C202 293 260 182 305 75L242 45C201 166 128 295 106 329C84 363 67 387 49 391C57 409 68 442 72 456ZM892 532C850 598 792 658 724 710C707 654 692 587 681 510L941 461L930 402L673 450C668 406 664 360 661 311L913 273L902 214L657 251C654 184 653 113 653 40H586C587 116 589 189 593 260L433 284L444 344L596 321C600 370 604 417 610 462L413 499L425 559L618 522C630 609 647 686 669 750C584 807 486 852 383 884C398 900 416 923 425 940C520 907 611 863 692 809C733 901 787 955 859 955C926 955 948 922 961 812C946 805 924 791 910 777C905 867 895 890 866 890C819 890 779 847 746 771C828 709 897 637 948 558Z'/><path id='g69' d='M53 813V880H949V813H535V225H900V156H105V225H461V813Z'/><path id='g70' d='M610 792C721 845 837 910 907 959L960 909C885 861 765 796 653 745ZM330 748C268 803 143 871 42 910C58 923 80 945 92 959C192 918 315 851 395 788ZM213 90V675H53V736H949V675H801V90ZM278 675V578H734V675ZM278 290H734V381H278ZM278 238V147H734V238ZM278 433H734V526H278Z'/><path id='g71' d='M279 41V123H68V178H279V256H89V310H279V329C279 347 276 370 268 394H51V449H241C211 495 159 541 73 572C88 584 109 606 120 620C226 576 286 511 316 449H541V394H337C343 370 346 348 346 329V310H515V256H346V178H534V123H346V41ZM587 84V578H651V143H834C806 187 770 238 735 283C826 334 859 379 859 416C859 438 852 453 833 461C821 465 806 468 791 469C761 471 723 471 678 466C690 482 699 506 700 523C739 527 783 526 818 523C837 521 860 515 877 507C909 490 926 463 925 421C925 375 895 327 807 274C850 223 895 162 934 110L888 81L876 84ZM153 620V904H220V681H463V957H532V681H795V826C795 839 791 843 774 844C757 844 698 844 632 843C641 860 651 883 655 901C741 901 793 902 824 891C854 881 863 862 863 827V620H532V540H463V620Z'/><path id='g72' d='M638 42C638 119 638 196 635 270H466V334H633C619 578 567 791 371 911C388 922 411 944 421 960C627 827 682 597 697 334H863C853 709 842 844 816 875C807 887 796 890 778 889C757 889 704 889 645 885C657 902 664 930 666 949C719 952 773 953 804 950C835 948 856 940 874 915C907 872 917 730 927 305C927 296 928 270 928 270H700C703 196 703 119 703 42ZM36 792 48 860C167 833 335 794 494 757L488 696L431 709V92H108V777ZM169 765V583H368V722ZM169 369H368V523H169ZM169 308V153H368V308Z'/></defs></svg><div class=r style='left:0px;top:0px;width:1275px;height:44px;background:#808080;'></div><div class=r style='left:0px;top:43px;width:1275px;height:1px;background:#747474;'></div><div class=r style='left:0px;top:44px;width:1px;height:1300px;background:#8a8a8a;'></div><div class=r style='left:1274px;top:0px;width:1px;height:44px;background:#666;'></div><svg class=r style='left:1px;top:1px' width='42' height='41' viewBox='0 0 42 41'>
<rect x='14' y='1' width='27' height='20' fill='#dcdcf4' stroke='#9a9ac8'/>
<rect x='33' y='3' width='6' height='7' fill='#20a020'/>
<rect x='27' y='12' width='11' height='1.5' fill='#8080a0'/><rect x='27' y='15' width='11' height='1.5' fill='#8080a0'/>
<rect x='1' y='20' width='28' height='20' fill='#dcdcf4' stroke='#9a9ac8'/>
<rect x='20' y='23' width='6' height='7' fill='#20a020'/>
<rect x='14' y='32' width='11' height='1.5' fill='#8080a0'/><rect x='14' y='35' width='11' height='1.5' fill='#8080a0'/>
<path d='M19 5 C8 6 6 12 8 18 L2 18 L11 27 L19 18 L13 18 C12 13 14 9 19 8 Z' fill='#3cc03c' stroke='#1e8a1e' stroke-width='0.8'/>
<path d='M25 37 C36 36 38 29 36 23 L41 23 L33 14 L25 23 L31 23 C32 28 30 32 25 33 Z' fill='#3cc03c' stroke='#1e8a1e' stroke-width='0.8'/>
</svg><div class=t style="left:56.56px;top:11.18px;font-size:24.5px;color:#ffffff;transform:scaleX(0.8933);">ALPC Logger</div><div class=t style="left:9.02px;top:54.25px;font-size:23px;transform:scaleX(0.9428);">File</div><div class=t style="left:65.92px;top:54.25px;font-size:23px;transform:scaleX(0.9310);">Trace</div><div class=t style="left:142.96px;top:54.25px;font-size:23px;transform:scaleX(0.9438);">Analysis</div><svg class=r style='left:4px;top:93px' width='9' height='40'><rect x='0' y='0' width='2' height='2' fill='#a0a0a0'/><rect x='4' y='0' width='2' height='2' fill='#a0a0a0'/><rect x='2' y='4' width='2' height='2' fill='#a0a0a0'/><rect x='6' y='4' width='2' height='2' fill='#a0a0a0'/><rect x='0' y='8' width='2' height='2' fill='#a0a0a0'/><rect x='4' y='8' width='2' height='2' fill='#a0a0a0'/><rect x='2' y='12' width='2' height='2' fill='#a0a0a0'/><rect x='6' y='12' width='2' height='2' fill='#a0a0a0'/><rect x='0' y='16' width='2' height='2' fill='#a0a0a0'/><rect x='4' y='16' width='2' height='2' fill='#a0a0a0'/><rect x='2' y='20' width='2' height='2' fill='#a0a0a0'/><rect x='6' y='20' width='2' height='2' fill='#a0a0a0'/><rect x='0' y='24' width='2' height='2' fill='#a0a0a0'/><rect x='4' y='24' width='2' height='2' fill='#a0a0a0'/><rect x='2' y='28' width='2' height='2' fill='#a0a0a0'/><rect x='6' y='28' width='2' height='2' fill='#a0a0a0'/><rect x='0' y='32' width='2' height='2' fill='#a0a0a0'/><rect x='4' y='32' width='2' height='2' fill='#a0a0a0'/><rect x='2' y='36' width='2' height='2' fill='#a0a0a0'/><rect x='6' y='36' width='2' height='2' fill='#a0a0a0'/></svg><svg class=r style='left:23px;top:95px' width='30' height='36' viewBox='0 0 30 36'>
<defs><linearGradient id='gr' x1='0' y1='0' x2='1' y2='1'><stop offset='0' stop-color='#9ad88a'/><stop offset='0.5' stop-color='#4fb83a'/><stop offset='1' stop-color='#2f9a22'/></linearGradient></defs>
<path d='M2 2 Q2 0 4 1 L28 16 Q30 18 28 20 L4 35 Q2 36 2 34 Z' fill='url(#gr)' stroke='#2a8a1e' stroke-width='1.2'/></svg><div class=t style="left:60.90px;top:102.80px;font-size:20px;transform:scaleX(0.9778);">Run</div><div class=r style='left:103px;top:93px;width:2px;height:40px;background:#b4b8c4;'></div><svg class=r style='left:114px;top:96px' width='34' height='35' viewBox='0 0 34 35'>
<defs><radialGradient id='sr' cx='0.7' cy='0.8' r='0.9'><stop offset='0' stop-color='#ffd0a0'/><stop offset='0.5' stop-color='#f8a088'/><stop offset='1' stop-color='#f0c8c8'/></radialGradient></defs>
<rect x='1' y='1' width='31' height='32' rx='3' fill='url(#sr)' stroke='#e8a0a0'/></svg><div class=t style="left:153.59px;top:102.80px;font-size:20px;color:#a6abb8;transform:scaleX(0.9976);">Stop</div><div class=r style='left:201px;top:93px;width:2px;height:40px;background:#b4b8c4;'></div><svg class=r style='left:212px;top:95px' width='36' height='36' viewBox='0 0 36 36'>
<defs><linearGradient id='fn' x1='0' x2='1'><stop offset='0' stop-color='#808080'/><stop offset='0.45' stop-color='#e8e8e8'/><stop offset='1' stop-color='#707070'/></linearGradient></defs>
<ellipse cx='17' cy='6' rx='16' ry='5' fill='#d0d0d0' stroke='#909090'/>
<path d='M1 6 Q3 12 14 22 L14 33 Q17 36 20 33 L20 22 Q31 12 33 6 Q30 11 17 11 Q4 11 1 6Z' fill='url(#fn)'/></svg><div class=t style="left:252.05px;top:102.80px;font-size:20px;transform:scaleX(0.9437);">Filter...</div><div class=r style='left:316px;top:93px;width:2px;height:40px;background:#b4b8c4;'></div><svg class=r style='left:328px;top:95px' width='32' height='35' viewBox='0 0 32 35'>
<path d='M1 14 L16 1 L31 14 L26 18 L16 9 L6 18 Z' fill='#7ab0e8'/>
<path d='M1 30 L16 17 L31 30 L26 34 L16 25 L6 34 Z' fill='#6aa0e0'/></svg><div class=t style="left:366.56px;top:102.80px;font-size:20px;color:#a6abb8;transform:scaleX(0.9265);">Call Stack</div><div class=r style='left:1px;top:140px;width:748px;height:39px;background:#fff;box-sizing:border-box;border:1px solid #c8c8c8;border-left:none'></div><div class=t style="left:11.32px;top:150.00px;font-size:18px;color:#6d6d6d;transform:scaleX(1.0013);">Filter (strings separated by ; prepend dash to filter out)</div><svg class=r style='left:721px;top:151px' width='18' height='17'><path d='M1.5 1.5 L16 15.5 M16 1.5 L1.5 15.5' stroke='#6e6e6e' stroke-width='2.6'/></svg><div class=r style='left:1px;top:185px;width:114px;height:36px;background:#c8dcf6;border-top:1.5px solid #a9a9a9;box-sizing:border-box'></div><div class=r style='left:115px;top:182px;width:163px;height:40px;background:#fff;box-sizing:border-box;border:1px solid #a9a9a9;border-bottom:none'></div><svg class=r style='left:0;top:175px' width='40' height='45' viewBox='0 175 40 45'>
<defs><linearGradient id='ev' x1='0' y1='0' x2='1' y2='1'><stop offset='0' stop-color='#ff4a10'/><stop offset='1' stop-color='#ffc000'/></linearGradient></defs>
<path d='M9.1 189.1 L16.7 207.8 L21.7 203.3 L24.2 209.8 L19.4 212.6 L36.6 216.1 L36.3 199.2 L32 203 L20.7 193.2 L17.7 198 Z' fill='url(#ev)' stroke='#e84010' stroke-width='0.7' stroke-linejoin='round'/></svg><div class=t style="left:43.96px;top:192.38px;font-size:22.5px;transform:scaleX(0.9421);">Events</div><svg class=r style='left:127px;top:189px' width='30' height='24' viewBox='0 0 30 24'>
<rect x='0.5' y='0.5' width='28' height='22' fill='#e8e8f6' stroke='#8888b0'/>
<rect x='21' y='3' width='5' height='6' fill='#10a020'/>
<rect x='3' y='3' width='9' height='1.5' fill='#9090a0'/><rect x='3' y='6' width='6' height='1.5' fill='#9090a0'/>
<rect x='14' y='13' width='11' height='1.5' fill='#9090a0'/><rect x='14' y='16' width='11' height='1.5' fill='#9090a0'/><rect x='14' y='19' width='11' height='1.5' fill='#9090a0'/></svg><div class=t style="left:162.34px;top:191.79px;font-size:22.6px;font-weight:bold;transform:scaleX(0.9659);">Messages</div><div class=r style='left:93px;top:225px;width:2px;height:36px;background:#d4d4d4;'></div><div class=r style='left:228px;top:225px;width:2px;height:36px;background:#d4d4d4;'></div><div class=r style='left:317px;top:225px;width:2px;height:36px;background:#d4d4d4;'></div><div class=r style='left:438px;top:225px;width:2px;height:36px;background:#d4d4d4;'></div><div class=r style='left:558px;top:225px;width:2px;height:36px;background:#d4d4d4;'></div><div class=r style='left:705px;top:225px;width:2px;height:36px;background:#d4d4d4;'></div><div class=r style='left:864px;top:225px;width:2px;height:36px;background:#d4d4d4;'></div><div class=r style='left:933px;top:225px;width:2px;height:36px;background:#d4d4d4;'></div><div class=r style='left:1078px;top:225px;width:2px;height:36px;background:#d4d4d4;'></div><div class=r style='left:1223px;top:225px;width:2px;height:36px;background:#d4d4d4;'></div><div class=r style='left:4px;top:261px;width:1271px;height:3px;background:#bdbdbd;'></div><div class=t style="left:18.11px;top:232.89px;font-size:19.9px;font-weight:bold;transform:scaleX(0.9695);">INDEX</div><div class=t style="left:110.06px;top:232.89px;font-size:19.9px;font-weight:bold;transform:scaleX(0.9430);">SEND TIME</div><div class=t style="left:244.77px;top:232.89px;font-size:19.9px;font-weight:bold;transform:scaleX(0.9224);">SEND</div><div class=t style="left:333.66px;top:232.89px;font-size:19.9px;font-weight:bold;transform:scaleX(0.9386);">SEND PID</div><div class=t style="left:454.76px;top:232.89px;font-size:19.9px;font-weight:bold;transform:scaleX(0.9457);">SEND TID</div><div class=t style="left:574.78px;top:232.89px;font-size:19.9px;font-weight:bold;transform:scaleX(0.9138);">MESSAGE ID</div><div class=t style="left:721.71px;top:232.89px;font-size:19.9px;font-weight:bold;transform:scaleX(0.8972);">RECEIVE TIME</div><div class=t style="left:950.01px;top:232.89px;font-size:19.9px;font-weight:bold;transform:scaleX(0.8943);">RECEIVE PID</div><div class=t style="left:1095.11px;top:232.89px;font-size:19.9px;font-weight:bold;transform:scaleX(0.8935);">RECEIVE TID</div><div class=c style='left:870px;top:225px;width:48px;height:36px'><div style='position:absolute;left:-870px;top:-225px'><div class=t style="left:879.98px;top:232.89px;font-size:19.9px;font-weight:bold;transform:scaleX(0.9200);">RECEIVE</div></div></div><div class=r style='left:4px;top:414.5px;width:1271px;height:37.5px;background:#6897f0;'></div><div class=c style='left:0;top:264px;width:1275px;height:1073px'><div style='position:absolute;left:0;top:-264px'><div class=t style="left:8.35px;top:273.64px;font-size:19.6px;transform:scaleX(0.9450);">726</div><div class=t style="left:99.28px;top:273.64px;font-size:19.6px;transform:scaleX(0.9450);">08:42:03.146</div><div class=c style='left:229px;top:264.5px;width:89px;height:37.5px'><div style='position:absolute;left:-229px;top:-264.5px'><div class=t style="left:234.25px;top:273.64px;font-size:19.6px;font-weight:bold;transform:scaleX(0.9800);">explorer</div></div></div><div class=t style="left:397.13px;top:273.64px;font-size:19.6px;transform:scaleX(0.9450);">4212</div><div class=t style="left:517.53px;top:273.64px;font-size:19.6px;transform:scaleX(0.9450);">2432</div><div class=t style="left:653.84px;top:273.64px;font-size:19.6px;transform:scaleX(0.9450);">11524</div><div class=t style="left:711.28px;top:273.64px;font-size:19.6px;transform:scaleX(0.9450);">08:42:03.146</div><div class=c style='left:866px;top:264.5px;width:65px;height:37.5px'><div style='position:absolute;left:-866px;top:-264.5px'><div class=t style="left:870.02px;top:273.64px;font-size:19.6px;font-weight:bold;transform:scaleX(0.9800);">svchost</div></div></div><div class=t style="left:1037.83px;top:273.64px;font-size:19.6px;transform:scaleX(0.9450);">4952</div><div class=t style="left:1182.14px;top:273.64px;font-size:19.6px;transform:scaleX(0.9450);">2204</div><div class=t style="left:8.35px;top:311.14px;font-size:19.6px;transform:scaleX(0.9450);">727</div><div class=t style="left:99.28px;top:311.14px;font-size:19.6px;transform:scaleX(0.9450);">08:42:03.146</div><div class=c style='left:229px;top:302.0px;width:89px;height:37.5px'><div style='position:absolute;left:-229px;top:-302.0px'><div class=t style="left:234.32px;top:311.14px;font-size:19.6px;font-weight:bold;transform:scaleX(0.9800);">svchost</div></div></div><div class=t style="left:397.13px;top:311.14px;font-size:19.6px;transform:scaleX(0.9450);">4952</div><div class=t style="left:517.14px;top:311.14px;font-size:19.6px;transform:scaleX(0.9450);">2204</div><div class=t style="left:653.84px;top:311.14px;font-size:19.6px;transform:scaleX(0.9450);">11524</div><div class=t style="left:711.28px;top:311.14px;font-size:19.6px;transform:scaleX(0.9450);">08:42:03.146</div><div class=c style='left:866px;top:302.0px;width:65px;height:37.5px'><div style='position:absolute;left:-866px;top:-302.0px'><div class=t style="left:869.95px;top:311.14px;font-size:19.6px;font-weight:bold;transform:scaleX(0.9800);">explorer</div></div></div><div class=t style="left:1037.83px;top:311.14px;font-size:19.6px;transform:scaleX(0.9450);">4212</div><div class=t style="left:1182.53px;top:311.14px;font-size:19.6px;transform:scaleX(0.9450);">2432</div><div class=t style="left:8.35px;top:348.64px;font-size:19.6px;transform:scaleX(0.9450);">728</div><div class=t style="left:99.28px;top:348.64px;font-size:19.6px;transform:scaleX(0.9450);">08:42:03.689</div><div class=c style='left:229px;top:339.5px;width:89px;height:37.5px'><div style='position:absolute;left:-229px;top:-339.5px'><div class=t style="left:234.45px;top:348.64px;font-size:19.6px;font-weight:bold;transform:scaleX(0.9800);">System</div></div></div><div class=t style="left:427.64px;top:348.64px;font-size:19.6px;transform:scaleX(0.9450);">4</div><div class=t style="left:507.10px;top:348.64px;font-size:19.6px;transform:scaleX(0.9450);">10588</div><div class=t style="left:653.84px;top:348.64px;font-size:19.6px;transform:scaleX(0.9450);">11524</div><div class=t style="left:711.28px;top:348.64px;font-size:19.6px;transform:scaleX(0.9450);">08:42:03.689</div><div class=c style='left:866px;top:339.5px;width:65px;height:37.5px'><div style='position:absolute;left:-866px;top:-339.5px'><div class=t style="left:870.02px;top:348.64px;font-size:19.6px;font-weight:bold;transform:scaleX(0.9800);">svchost</div></div></div><div class=t style="left:1037.62px;top:348.64px;font-size:19.6px;transform:scaleX(0.9450);">1240</div><div class=t style="left:1182.53px;top:348.64px;font-size:19.6px;transform:scaleX(0.9450);">1072</div><div class=t style="left:8.35px;top:386.14px;font-size:19.6px;transform:scaleX(0.9450);">729</div><div class=t style="left:99.28px;top:386.14px;font-size:19.6px;transform:scaleX(0.9450);">08:42:03.689</div><div class=c style='left:229px;top:377.0px;width:89px;height:37.5px'><div style='position:absolute;left:-229px;top:-377.0px'><div class=t style="left:234.32px;top:386.14px;font-size:19.6px;font-weight:bold;transform:scaleX(0.9800);">svchost</div></div></div><div class=t style="left:396.92px;top:386.14px;font-size:19.6px;transform:scaleX(0.9450);">1240</div><div class=t style="left:517.53px;top:386.14px;font-size:19.6px;transform:scaleX(0.9450);">1072</div><div class=t style="left:653.84px;top:386.14px;font-size:19.6px;transform:scaleX(0.9450);">11524</div><div class=t style="left:711.28px;top:386.14px;font-size:19.6px;transform:scaleX(0.9450);">08:42:03.689</div><div class=c style='left:866px;top:377.0px;width:65px;height:37.5px'><div style='position:absolute;left:-866px;top:-377.0px'><div class=t style="left:870.15px;top:386.14px;font-size:19.6px;font-weight:bold;transform:scaleX(0.9800);">System</div></div></div><div class=t style="left:1068.34px;top:386.14px;font-size:19.6px;transform:scaleX(0.9450);">4</div><div class=t style="left:1172.10px;top:386.14px;font-size:19.6px;transform:scaleX(0.9450);">10588</div><div class=t style="left:8.35px;top:423.64px;font-size:19.6px;color:#ffffff;transform:scaleX(0.9450);">730</div><div class=t style="left:99.28px;top:423.64px;font-size:19.6px;color:#ffffff;transform:scaleX(0.9450);">08:42:03.689</div><div class=c style='left:229px;top:414.5px;width:89px;height:37.5px'><div style='position:absolute;left:-229px;top:-414.5px'><div class=t style="left:233.72px;top:423.64px;font-size:19.6px;font-weight:bold;color:#ffffff;transform:scaleX(0.9800);">PING</div></div></div><div class=t style="left:396.74px;top:423.64px;font-size:19.6px;color:#ffffff;transform:scaleX(0.9450);">8944</div><div class=t style="left:517.40px;top:423.64px;font-size:19.6px;color:#ffffff;transform:scaleX(0.9450);">6768</div><div class=t style="left:654.02px;top:423.64px;font-size:19.6px;color:#ffffff;transform:scaleX(0.9450);">14240</div><div class=t style="left:711.28px;top:423.64px;font-size:19.6px;color:#ffffff;transform:scaleX(0.9450);">08:42:03.690</div><div class=c style='left:866px;top:414.5px;width:65px;height:37.5px'><div style='position:absolute;left:-866px;top:-414.5px'><div class=t style="left:870.02px;top:423.64px;font-size:19.6px;font-weight:bold;color:#ffffff;transform:scaleX(0.9800);">svchost</div></div></div><div class=t style="left:1037.62px;top:423.64px;font-size:19.6px;color:#ffffff;transform:scaleX(0.9450);">1240</div><div class=t style="left:1182.53px;top:423.64px;font-size:19.6px;color:#ffffff;transform:scaleX(0.9450);">1072</div><div class=t style="left:8.35px;top:461.14px;font-size:19.6px;transform:scaleX(0.9450);">731</div><div class=t style="left:99.28px;top:461.14px;font-size:19.6px;transform:scaleX(0.9450);">08:42:03.697</div><div class=c style='left:229px;top:452.0px;width:89px;height:37.5px'><div style='position:absolute;left:-229px;top:-452.0px'><div class=t style="left:234.25px;top:461.14px;font-size:19.6px;font-weight:bold;transform:scaleX(0.9800);">conhost</div></div></div><div class=t style="left:386.44px;top:461.14px;font-size:19.6px;transform:scaleX(0.9450);">10304</div><div class=t style="left:517.40px;top:461.14px;font-size:19.6px;transform:scaleX(0.9450);">6788</div><div class=t style="left:653.84px;top:461.14px;font-size:19.6px;transform:scaleX(0.9450);">11524</div><div class=t style="left:711.28px;top:461.14px;font-size:19.6px;transform:scaleX(0.9450);">08:42:03.697</div><div class=c style='left:866px;top:452.0px;width:65px;height:37.5px'><div style='position:absolute;left:-866px;top:-452.0px'><div class=t style="left:869.91px;top:461.14px;font-size:19.6px;font-weight:bold;transform:scaleX(0.9800);">dwm</div></div></div><div class=t style="left:1037.62px;top:461.14px;font-size:19.6px;transform:scaleX(0.9450);">1280</div><div class=t style="left:1182.41px;top:461.14px;font-size:19.6px;transform:scaleX(0.9450);">1616</div><div class=t style="left:8.35px;top:498.64px;font-size:19.6px;transform:scaleX(0.9450);">732</div><div class=t style="left:99.28px;top:498.64px;font-size:19.6px;transform:scaleX(0.9450);">08:42:03.697</div><div class=c style='left:229px;top:489.5px;width:89px;height:37.5px'><div style='position:absolute;left:-229px;top:-489.5px'><div class=t style="left:234.25px;top:498.64px;font-size:19.6px;font-weight:bold;transform:scaleX(0.9800);">conhost</div></div></div><div class=t style="left:386.44px;top:498.64px;font-size:19.6px;transform:scaleX(0.9450);">10304</div><div class=t style="left:517.40px;top:498.64px;font-size:19.6px;transform:scaleX(0.9450);">6788</div><div class=t style="left:664.32px;top:498.64px;font-size:19.6px;transform:scaleX(0.9450);">9380</div><div class=t style="left:711.28px;top:498.64px;font-size:19.6px;transform:scaleX(0.9450);">08:42:03.697</div><div class=c style='left:866px;top:489.5px;width:65px;height:37.5px'><div style='position:absolute;left:-866px;top:-489.5px'><div class=t style="left:869.91px;top:498.64px;font-size:19.6px;font-weight:bold;transform:scaleX(0.9800);">dwm</div></div></div><div class=t style="left:1037.62px;top:498.64px;font-size:19.6px;transform:scaleX(0.9450);">1280</div><div class=t style="left:1182.41px;top:498.64px;font-size:19.6px;transform:scaleX(0.9450);">1616</div><div class=t style="left:8.35px;top:536.14px;font-size:19.6px;transform:scaleX(0.9450);">733</div><div class=t style="left:99.28px;top:536.14px;font-size:19.6px;transform:scaleX(0.9450);">08:42:03.697</div><div class=c style='left:229px;top:527.0px;width:89px;height:37.5px'><div style='position:absolute;left:-229px;top:-527.0px'><div class=t style="left:234.25px;top:536.14px;font-size:19.6px;font-weight:bold;transform:scaleX(0.9800);">conhost</div></div></div><div class=t style="left:386.44px;top:536.14px;font-size:19.6px;transform:scaleX(0.9450);">10304</div><div class=t style="left:517.40px;top:536.14px;font-size:19.6px;transform:scaleX(0.9450);">6788</div><div class=t style="left:654.02px;top:536.14px;font-size:19.6px;transform:scaleX(0.9450);">13560</div><div class=t style="left:711.28px;top:536.14px;font-size:19.6px;transform:scaleX(0.9450);">08:42:03.697</div><div class=c style='left:866px;top:527.0px;width:65px;height:37.5px'><div style='position:absolute;left:-866px;top:-527.0px'><div class=t style="left:869.91px;top:536.14px;font-size:19.6px;font-weight:bold;transform:scaleX(0.9800);">dwm</div></div></div><div class=t style="left:1037.62px;top:536.14px;font-size:19.6px;transform:scaleX(0.9450);">1280</div><div class=t style="left:1182.41px;top:536.14px;font-size:19.6px;transform:scaleX(0.9450);">1616</div><div class=t style="left:8.35px;top:573.64px;font-size:19.6px;transform:scaleX(0.9450);">734</div><div class=t style="left:99.28px;top:573.64px;font-size:19.6px;transform:scaleX(0.9450);">08:42:04.363</div><div class=c style='left:229px;top:564.5px;width:89px;height:37.5px'><div style='position:absolute;left:-229px;top:-564.5px'><div class=t style="left:234.25px;top:573.64px;font-size:19.6px;font-weight:bold;transform:scaleX(0.9800);">conhost</div></div></div><div class=t style="left:386.44px;top:573.64px;font-size:19.6px;transform:scaleX(0.9450);">10304</div><div class=t style="left:517.40px;top:573.64px;font-size:19.6px;transform:scaleX(0.9450);">6788</div><div class=t style="left:654.02px;top:573.64px;font-size:19.6px;transform:scaleX(0.9450);">13560</div><div class=t style="left:711.28px;top:573.64px;font-size:19.6px;transform:scaleX(0.9450);">08:42:04.363</div><div class=c style='left:866px;top:564.5px;width:65px;height:37.5px'><div style='position:absolute;left:-866px;top:-564.5px'><div class=t style="left:869.91px;top:573.64px;font-size:19.6px;font-weight:bold;transform:scaleX(0.9800);">dwm</div></div></div><div class=t style="left:1037.62px;top:573.64px;font-size:19.6px;transform:scaleX(0.9450);">1280</div><div class=t style="left:1182.41px;top:573.64px;font-size:19.6px;transform:scaleX(0.9450);">1616</div><div class=t style="left:8.35px;top:611.14px;font-size:19.6px;transform:scaleX(0.9450);">735</div><div class=t style="left:99.28px;top:611.14px;font-size:19.6px;transform:scaleX(0.9450);">08:42:04.364</div><div class=c style='left:229px;top:602.0px;width:89px;height:37.5px'><div style='position:absolute;left:-229px;top:-602.0px'><div class=t style="left:234.25px;top:611.14px;font-size:19.6px;font-weight:bold;transform:scaleX(0.9800);">conhost</div></div></div><div class=t style="left:386.44px;top:611.14px;font-size:19.6px;transform:scaleX(0.9450);">10304</div><div class=t style="left:517.40px;top:611.14px;font-size:19.6px;transform:scaleX(0.9450);">6788</div><div class=t style="left:654.02px;top:611.14px;font-size:19.6px;transform:scaleX(0.9450);">13560</div><div class=t style="left:711.28px;top:611.14px;font-size:19.6px;transform:scaleX(0.9450);">08:42:04.364</div><div class=c style='left:866px;top:602.0px;width:65px;height:37.5px'><div style='position:absolute;left:-866px;top:-602.0px'><div class=t style="left:869.91px;top:611.14px;font-size:19.6px;font-weight:bold;transform:scaleX(0.9800);">dwm</div></div></div><div class=t style="left:1037.62px;top:611.14px;font-size:19.6px;transform:scaleX(0.9450);">1280</div><div class=t style="left:1182.41px;top:611.14px;font-size:19.6px;transform:scaleX(0.9450);">1616</div><div class=t style="left:8.35px;top:648.64px;font-size:19.6px;transform:scaleX(0.9450);">736</div><div class=t style="left:99.28px;top:648.64px;font-size:19.6px;transform:scaleX(0.9450);">08:42:04.364</div><div class=c style='left:229px;top:639.5px;width:89px;height:37.5px'><div style='position:absolute;left:-229px;top:-639.5px'><div class=t style="left:234.25px;top:648.64px;font-size:19.6px;font-weight:bold;transform:scaleX(0.9800);">conhost</div></div></div><div class=t style="left:8.35px;top:686.14px;font-size:19.6px;transform:scaleX(0.9450);">737</div><div class=t style="left:99.28px;top:686.14px;font-size:19.6px;transform:scaleX(0.9450);">08:42:04.365</div><div class=c style='left:229px;top:677.0px;width:89px;height:37.5px'><div style='position:absolute;left:-229px;top:-677.0px'><div class=t style="left:234.25px;top:686.14px;font-size:19.6px;font-weight:bold;transform:scaleX(0.9800);">conhost</div></div></div><div class=t style="left:8.35px;top:723.64px;font-size:19.6px;transform:scaleX(0.9450);">738</div><div class=t style="left:99.28px;top:723.64px;font-size:19.6px;transform:scaleX(0.9450);">08:42:04.366</div><div class=c style='left:229px;top:714.5px;width:89px;height:37.5px'><div style='position:absolute;left:-229px;top:-714.5px'><div class=t style="left:234.25px;top:723.64px;font-size:19.6px;font-weight:bold;transform:scaleX(0.9800);">conhost</div></div></div><div class=t style="left:8.35px;top:761.14px;font-size:19.6px;transform:scaleX(0.9450);">739</div><div class=t style="left:99.28px;top:761.14px;font-size:19.6px;transform:scaleX(0.9450);">08:42:04.367</div><div class=c style='left:229px;top:752.0px;width:89px;height:37.5px'><div style='position:absolute;left:-229px;top:-752.0px'><div class=t style="left:234.25px;top:761.14px;font-size:19.6px;font-weight:bold;transform:scaleX(0.9800);">conhost</div></div></div><div class=t style="left:8.35px;top:798.64px;font-size:19.6px;transform:scaleX(0.9450);">740</div><div class=t style="left:99.28px;top:798.64px;font-size:19.6px;transform:scaleX(0.9450);">08:42:04.369</div><div class=c style='left:229px;top:789.5px;width:89px;height:37.5px'><div style='position:absolute;left:-229px;top:-789.5px'><div class=t style="left:234.25px;top:798.64px;font-size:19.6px;font-weight:bold;transform:scaleX(0.9800);">conhost</div></div></div><div class=t style="left:8.35px;top:836.14px;font-size:19.6px;transform:scaleX(0.9450);">741</div><div class=t style="left:99.28px;top:836.14px;font-size:19.6px;transform:scaleX(0.9450);">08:42:04.369</div><div class=c style='left:229px;top:827.0px;width:89px;height:37.5px'><div style='position:absolute;left:-229px;top:-827.0px'><div class=t style="left:234.25px;top:836.14px;font-size:19.6px;font-weight:bold;transform:scaleX(0.9800);">conhost</div></div></div><div class=t style="left:8.35px;top:873.64px;font-size:19.6px;transform:scaleX(0.9450);">742</div><div class=t style="left:99.28px;top:873.64px;font-size:19.6px;transform:scaleX(0.9450);">08:42:04.370</div><div class=c style='left:229px;top:864.5px;width:89px;height:37.5px'><div style='position:absolute;left:-229px;top:-864.5px'><div class=t style="left:234.25px;top:873.64px;font-size:19.6px;font-weight:bold;transform:scaleX(0.9800);">conhost</div></div></div><div class=t style="left:8.35px;top:911.14px;font-size:19.6px;transform:scaleX(0.9450);">743</div><div class=t style="left:99.28px;top:911.14px;font-size:19.6px;transform:scaleX(0.9450);">08:42:04.373</div><div class=c style='left:229px;top:902.0px;width:89px;height:37.5px'><div style='position:absolute;left:-229px;top:-902.0px'><div class=t style="left:234.21px;top:911.14px;font-size:19.6px;font-weight:bold;transform:scaleX(0.9800);">dwm</div></div></div><div class=t style="left:8.35px;top:948.64px;font-size:19.6px;transform:scaleX(0.9450);">744</div><div class=t style="left:99.28px;top:948.64px;font-size:19.6px;transform:scaleX(0.9450);">08:42:04.614</div><div class=c style='left:229px;top:939.5px;width:89px;height:37.5px'><div style='position:absolute;left:-229px;top:-939.5px'><div class=t style="left:234.45px;top:948.64px;font-size:19.6px;font-weight:bold;transform:scaleX(0.9800);">System</div></div></div><div class=t style="left:8.35px;top:986.14px;font-size:19.6px;transform:scaleX(0.9450);">745</div><div class=t style="left:99.28px;top:986.14px;font-size:19.6px;transform:scaleX(0.9450);">08:42:04.615</div><div class=c style='left:229px;top:977.0px;width:89px;height:37.5px'><div style='position:absolute;left:-229px;top:-977.0px'><div class=t style="left:234.32px;top:986.14px;font-size:19.6px;font-weight:bold;transform:scaleX(0.9800);">svchost</div></div></div><div class=t style="left:8.35px;top:1023.64px;font-size:19.6px;transform:scaleX(0.9450);">746</div><div class=t style="left:99.28px;top:1023.64px;font-size:19.6px;transform:scaleX(0.9450);">08:42:04.615</div><div class=c style='left:229px;top:1014.5px;width:89px;height:37.5px'><div style='position:absolute;left:-229px;top:-1014.5px'><div class=t style="left:233.72px;top:1023.64px;font-size:19.6px;font-weight:bold;transform:scaleX(0.9800);">PING</div></div></div><div class=t style="left:8.35px;top:1061.14px;font-size:19.6px;transform:scaleX(0.9450);">747</div><div class=t style="left:99.28px;top:1061.14px;font-size:19.6px;transform:scaleX(0.9450);">08:42:04.623</div><div class=c style='left:229px;top:1052.0px;width:89px;height:37.5px'><div style='position:absolute;left:-229px;top:-1052.0px'><div class=t style="left:234.25px;top:1061.14px;font-size:19.6px;font-weight:bold;transform:scaleX(0.9800);">conhost</div></div></div><div class=t style="left:8.35px;top:1098.64px;font-size:19.6px;transform:scaleX(0.9450);">748</div><div class=t style="left:99.28px;top:1098.64px;font-size:19.6px;transform:scaleX(0.9450);">08:42:04.624</div><div class=c style='left:229px;top:1089.5px;width:89px;height:37.5px'><div style='position:absolute;left:-229px;top:-1089.5px'><div class=t style="left:234.25px;top:1098.64px;font-size:19.6px;font-weight:bold;transform:scaleX(0.9800);">conhost</div></div></div><div class=t style="left:8.35px;top:1136.14px;font-size:19.6px;transform:scaleX(0.9450);">749</div><div class=t style="left:99.28px;top:1136.14px;font-size:19.6px;transform:scaleX(0.9450);">08:42:04.624</div><div class=c style='left:229px;top:1127.0px;width:89px;height:37.5px'><div style='position:absolute;left:-229px;top:-1127.0px'><div class=t style="left:234.25px;top:1136.14px;font-size:19.6px;font-weight:bold;transform:scaleX(0.9800);">conhost</div></div></div><div class=t style="left:8.35px;top:1173.64px;font-size:19.6px;transform:scaleX(0.9450);">750</div><div class=t style="left:99.28px;top:1173.64px;font-size:19.6px;transform:scaleX(0.9450);">08:42:05.037</div><div class=c style='left:229px;top:1164.5px;width:89px;height:37.5px'><div style='position:absolute;left:-229px;top:-1164.5px'><div class=t style="left:234.25px;top:1173.64px;font-size:19.6px;font-weight:bold;transform:scaleX(0.9800);">explorer</div></div></div><div class=t style="left:8.35px;top:1211.14px;font-size:19.6px;transform:scaleX(0.9450);">751</div><div class=t style="left:99.28px;top:1211.14px;font-size:19.6px;transform:scaleX(0.9450);">08:42:05.039</div><div class=c style='left:229px;top:1202.0px;width:89px;height:37.5px'><div style='position:absolute;left:-229px;top:-1202.0px'><div class=t style="left:234.25px;top:1211.14px;font-size:19.6px;font-weight:bold;transform:scaleX(0.9800);">explorer</div></div></div><div class=t style="left:8.35px;top:1248.64px;font-size:19.6px;transform:scaleX(0.9450);">752</div><div class=t style="left:99.28px;top:1248.64px;font-size:19.6px;transform:scaleX(0.9450);">08:42:05.039</div><div class=c style='left:229px;top:1239.5px;width:89px;height:37.5px'><div style='position:absolute;left:-229px;top:-1239.5px'><div class=t style="left:234.25px;top:1248.64px;font-size:19.6px;font-weight:bold;transform:scaleX(0.9800);">explorer</div></div></div><div class=t style="left:8.35px;top:1286.14px;font-size:19.6px;transform:scaleX(0.9450);">753</div><div class=t style="left:99.28px;top:1286.14px;font-size:19.6px;transform:scaleX(0.9450);">08:42:05.039</div><div class=c style='left:229px;top:1277.0px;width:89px;height:37.5px'><div style='position:absolute;left:-229px;top:-1277.0px'><div class=t style="left:234.25px;top:1286.14px;font-size:19.6px;font-weight:bold;transform:scaleX(0.9800);">explorer</div></div></div><div class=t style="left:8.35px;top:1323.64px;font-size:19.6px;transform:scaleX(0.9450);">754</div><div class=t style="left:99.28px;top:1323.64px;font-size:19.6px;transform:scaleX(0.9450);">08:42:05.039</div><div class=c style='left:229px;top:1314.5px;width:89px;height:37.5px'><div style='position:absolute;left:-229px;top:-1314.5px'><div class=t style="left:234.25px;top:1323.64px;font-size:19.6px;font-weight:bold;transform:scaleX(0.9800);">explorer</div></div></div></div></div><div class=r style='left:0px;top:1342px;width:1275px;height:24px;background:#7a7a7a;'></div><div class=r style='left:84px;top:1345px;width:1px;height:21px;background:#9a9a9a;'></div><div class=r style='left:221px;top:1345px;width:1px;height:21px;background:#9a9a9a;'></div><div class=t style="left:2.69px;top:1349.34px;font-size:19.6px;color:#fff;transform:scaleX(1.0230);">Stopped</div><div class=t style="left:92.47px;top:1349.34px;font-size:19.6px;color:#fff;transform:scaleX(0.9532);">Events: 3820</div><div class=t style="left:228.88px;top:1349.34px;font-size:19.6px;color:#fff;transform:scaleX(1.0098);">Filtered</div><div class=r style='left:1262px;top:44px;width:12px;height:1298px;background:linear-gradient(90deg,rgba(0,0,0,0) 0%,rgba(0,0,0,0.08) 100%);'></div><div class=r style='left:1274px;top:44px;width:1px;height:1298px;background:#a0a0a0;'></div><div class=r style='left:298px;top:622px;width:947px;height:760px;background:#f0f0f0;box-shadow:0 0 18px rgba(0,0,0,0.28);border:1px solid #6f6f6f;box-sizing:border-box;z-index:5'></div><div style='position:absolute;left:0;top:0;z-index:6'><div class=r style='left:299px;top:623px;width:945px;height:44px;background:#fff;'></div><svg class=r style='left:316px;top:636px' width='17' height='16'><rect x='0.5' y='0.5' width='16' height='15' fill='#e8e8e8' stroke='#a0a0a0'/><rect x='1' y='3' width='9' height='12' fill='#1070d8'/><rect x='11' y='2' width='4' height='10' fill='#c0c0c0'/></svg><div class=t style="left:338.89px;top:634.57px;font-size:18.5px;transform:scaleX(0.9990);">svchost.exe:1240</div><div class=t style="left:488.73px;top:634.57px;font-size:18.5px;transform:scaleX(1.0173);">(LocalService -p -s nsi) Properties</div><div class=r style='left:1060px;top:644px;width:17px;height:1.3px;background:#222;'></div><div class=r style='left:1131px;top:638px;width:15px;height:14px;background:transparent;box-sizing:border-box;border:1.3px solid #222'></div><svg class=r style='left:1201px;top:637px' width='17' height='15'><path d='M0.5 0.5 L16.5 14.5 M16.5 0.5 L0.5 14.5' stroke='#222' stroke-width='1.3'/></svg><div class=r style='left:315px;top:724px;width:909px;height:700px;background:#fff;box-sizing:border-box;border:1px solid #d9d9d9'></div><div class=r style='left:315px;top:676px;width:224px;height:25px;background:#f0f0f0;box-sizing:border-box;border:1px solid #d9d9d9'></div><div class=r style='left:538px;top:676px;width:259px;height:25px;background:#f0f0f0;box-sizing:border-box;border:1px solid #d9d9d9'></div><div class=r style='left:796px;top:676px;width:211px;height:25px;background:#f0f0f0;box-sizing:border-box;border:1px solid #d9d9d9'></div><div class=r style='left:1006px;top:676px;width:216px;height:25px;background:#f0f0f0;box-sizing:border-box;border:1px solid #d9d9d9'></div><div class=r style='left:315px;top:700px;width:79px;height:25px;background:#f0f0f0;box-sizing:border-box;border:1px solid #d9d9d9'></div><div class=r style='left:393px;top:700px;width:124px;height:25px;background:#f0f0f0;box-sizing:border-box;border:1px solid #d9d9d9'></div><div class=r style='left:516px;top:700px;width:173px;height:25px;background:#f0f0f0;box-sizing:border-box;border:1px solid #d9d9d9'></div><div class=r style='left:688px;top:700px;width:159px;height:25px;background:#f0f0f0;box-sizing:border-box;border:1px solid #d9d9d9'></div><div class=r style='left:846px;top:700px;width:114px;height:25px;background:#f0f0f0;box-sizing:border-box;border:1px solid #d9d9d9'></div><div class=r style='left:1052px;top:700px;width:89px;height:25px;background:#f0f0f0;box-sizing:border-box;border:1px solid #d9d9d9'></div><div class=r style='left:1140px;top:700px;width:82px;height:25px;background:#f0f0f0;box-sizing:border-box;border:1px solid #d9d9d9'></div><div class=r style='left:958px;top:698px;width:95px;height:28px;background:#fff;box-sizing:border-box;border:1px solid #d9d9d9;border-bottom:none'></div><div class=t style="left:398.79px;top:680.48px;font-size:16.5px;transform:scaleX(0.9418);">Security</div><div class=t style="left:621.05px;top:680.48px;font-size:16.5px;transform:scaleX(0.9939);">Environment</div><div class=t style="left:880.45px;top:680.48px;font-size:16.5px;transform:scaleX(0.9746);">Job</div><div class=t style="left:1090.17px;top:680.48px;font-size:16.5px;transform:scaleX(0.9759);">Strings</div><div class=t style="left:329.96px;top:704.88px;font-size:16.5px;transform:scaleX(1.0137);">Image</div><div class=t style="left:408.70px;top:704.88px;font-size:16.5px;transform:scaleX(0.9603);">Performance</div><div class=t style="left:531.71px;top:704.88px;font-size:16.5px;transform:scaleX(0.9546);">Performance Graph</div><div class=t style="left:703.08px;top:704.88px;font-size:16.5px;transform:scaleX(0.9761);">Disk and Network</div><div class=t style="left:862.03px;top:704.88px;font-size:16.5px;transform:scaleX(0.9277);">GPU Graph</div><div class=t style="left:975.82px;top:702.48px;font-size:16.5px;transform:scaleX(0.9027);">Services</div><div class=t style="left:1066.65px;top:704.88px;font-size:16.5px;transform:scaleX(0.9519);">Threads</div><div class=t style="left:1156.94px;top:704.88px;font-size:16.5px;transform:scaleX(0.9686);">TCP/IP</div><svg class=r style='left:340px;top:749px' width='50' height='42' viewBox='0 0 50 42'><polygon points='27.3,18.1 30.4,21.6 29.0,24.1 24.4,23.5 22.8,24.8 22.5,29.4 19.8,30.2 17.0,26.5 14.9,26.3 11.4,29.4 8.9,28.0 9.5,23.4 8.2,21.8 3.6,21.5 2.8,18.8 6.5,16.0 6.7,13.9 3.6,10.4 5.0,7.9 9.6,8.5 11.2,7.2 11.5,2.6 14.2,1.8 17.0,5.5 19.1,5.7 22.6,2.6 25.1,4.0 24.5,8.6 25.8,10.2 30.4,10.5 31.2,13.2 27.5,16.0' fill='#c0c0c0' stroke='#000' stroke-width='1.5' stroke-linejoin='miter'/><rect x='12.5' y='1' width='9' height='16' rx='1' fill='#d8d8d8' stroke='#000' stroke-width='1.5'/><rect x='16.5' y='3' width='3' height='13' fill='#8a8a8a'/><rect x='13.5' y='4.5' width='7' height='1.5' fill='#000'/><defs><pattern id='chk' width='3' height='3' patternUnits='userSpaceOnUse'><rect width='3' height='3' fill='#ffff00'/><rect width='1.5' height='1.5' fill='#fff'/><rect x='1.5' y='1.5' width='1.5' height='1.5' fill='#fff'/></pattern></defs><polygon points='40.8,32.8 42.7,37.0 40.8,38.9 36.6,36.9 34.8,37.6 33.2,41.9 30.5,41.9 29.0,37.5 27.2,36.8 23.0,38.7 21.1,36.8 23.1,32.6 22.4,30.8 18.1,29.2 18.1,26.5 22.5,25.0 23.2,23.2 21.3,19.0 23.2,17.1 27.4,19.1 29.2,18.4 30.8,14.1 33.5,14.1 35.0,18.5 36.8,19.2 41.0,17.3 42.9,19.2 40.9,23.4 41.6,25.2 45.9,26.8 45.9,29.5 41.5,31.0' fill='url(#chk)' stroke='#000' stroke-width='1.5' stroke-linejoin='miter'/><rect x='27' y='13' width='9' height='16' rx='1' fill='#d8d8d8' stroke='#000' stroke-width='1.5'/><rect x='31' y='15' width='3' height='13' fill='#8a8a8a'/><rect x='28' y='17' width='7' height='1.5' fill='#000'/></svg><div class=t style="left:417.78px;top:763.48px;font-size:16.5px;transform:scaleX(0.9554);">Services registered in this process:</div><div class=r style='left:333px;top:807px;width:873px;height:478px;background:#fff;box-sizing:border-box;border:1px solid #828790'></div><div class=r style='left:372px;top:812px;width:1px;height:20px;background:#e5e5e5;'></div><div class=r style='left:632px;top:812px;width:1px;height:20px;background:#e5e5e5;'></div><div class=r style='left:334px;top:834px;width:871px;height:17px;background:#0078d7;'></div><div class=t style="left:340.48px;top:817.24px;font-size:13.5px;font-family:'Liberation Mono';">S...</div><div class=t style="left:377.22px;top:817.24px;font-size:13.5px;font-family:'Liberation Mono';transform:scaleX(1.0088);">Display Name</div><div class=t style="left:637.25px;top:817.24px;font-size:13.5px;font-family:'Liberation Mono';transform:scaleX(1.0779);">Path</div><div class=t style="left:335.32px;top:836.74px;font-size:13.5px;font-family:'Liberation Mono';color:#fff;">nsi</div><div class=t style="left:373.44px;top:836.74px;font-size:13.5px;font-family:'Liberation Mono';color:#fff;transform:scaleX(0.9949);">Network Store Interface Service</div><div class=t style="left:633.96px;top:836.74px;font-size:13.5px;font-family:'Liberation Mono';color:#fff;transform:scaleX(0.9874);">C:\Windows\system32\nsisvc.dll</div><svg class=r style='left:333.40px;top:1298.50px;overflow:visible' width='866.0' height='16' fill='#000'><use href='#g0' transform='translate(0.00,0) scale(0.01600)'/><use href='#g1' transform='translate(16.00,0) scale(0.01600)'/><use href='#g2' transform='translate(32.00,0) scale(0.01600)'/><use href='#g3' transform='translate(48.00,0) scale(0.01600)'/><use href='#g4' transform='translate(64.00,0) scale(0.01600)'/><use href='#g5' transform='translate(80.00,0) scale(0.01600)'/><use href='#g6' transform='translate(96.00,0) scale(0.01600)'/><use href='#g7' transform='translate(112.00,0) scale(0.01600)'/><use href='#g8' transform='translate(128.00,0) scale(0.01600)'/><use href='#g5' transform='translate(144.00,0) scale(0.01600)'/><use href='#g9' transform='translate(160.00,0) scale(0.01600)'/><use href='#g10' transform='translate(176.00,0) scale(0.01600)'/><use href='#g11' transform='translate(192.00,0) scale(0.01600)'/><use href='#g12' transform='translate(208.00,0) scale(0.01600)'/><use href='#g13' transform='translate(224.00,0) scale(0.01600)'/><use href='#g14' transform='translate(240.00,0) scale(0.01600)'/><use href='#g15' transform='translate(256.00,0) scale(0.01600)'/><use href='#g16' transform='translate(278.50,0) scale(0.01600)'/><use href='#g17' transform='translate(294.50,0) scale(0.01600)'/><use href='#g18' transform='translate(310.50,0) scale(0.01600)'/><use href='#g19' transform='translate(326.50,0) scale(0.01600)'/><use href='#g20' transform='translate(342.50,0) scale(0.01600)'/><use href='#g21' transform='translate(363.50,0) scale(0.01600)'/><use href='#g22' transform='translate(379.50,0) scale(0.01600)'/><use href='#g23' transform='translate(395.50,0) scale(0.01600)'/><use href='#g24' transform='translate(411.50,0) scale(0.01600)'/><use href='#g25' transform='translate(427.50,0) scale(0.01600)'/><use href='#g26' transform='translate(450.00,0) scale(0.01600)'/><use href='#g27' transform='translate(466.00,0) scale(0.01600)'/><use href='#g28' transform='translate(482.00,0) scale(0.01600)'/><use href='#g0' transform='translate(498.00,0) scale(0.01600)'/><use href='#g1' transform='translate(514.00,0) scale(0.01600)'/><use href='#g2' transform='translate(530.00,0) scale(0.01600)'/><use href='#g29' transform='translate(546.00,0) scale(0.01600)'/><use href='#g30' transform='translate(562.00,0) scale(0.01600)'/><use href='#g31' transform='translate(578.00,0) scale(0.01600)'/><use href='#g32' transform='translate(594.00,0) scale(0.01600)'/><use href='#g33' transform='translate(610.00,0) scale(0.01600)'/><use href='#g12' transform='translate(626.00,0) scale(0.01600)'/><use href='#g13' transform='translate(642.00,0) scale(0.01600)'/><use href='#g34' transform='translate(658.00,0) scale(0.01600)'/><use href='#g23' transform='translate(674.00,0) scale(0.01600)'/><use href='#g26' transform='translate(690.00,0) scale(0.01600)'/><use href='#g17' transform='translate(706.00,0) scale(0.01600)'/><use href='#g35' transform='translate(722.00,0) scale(0.01600)'/><use href='#g36' transform='translate(738.00,0) scale(0.01600)'/><use href='#g4' transform='translate(754.00,0) scale(0.01600)'/><use href='#g0' transform='translate(770.00,0) scale(0.01600)'/><use href='#g1' transform='translate(786.00,0) scale(0.01600)'/><use href='#g2' transform='translate(802.00,0) scale(0.01600)'/><use href='#g18' transform='translate(818.00,0) scale(0.01600)'/><use href='#g37' transform='translate(834.00,0) scale(0.01600)'/><use href='#g38' transform='translate(850.00,0) scale(0.01600)'/></svg><div class=t style="left:605.40px;top:1298.66px;font-size:16.0px;color:#000;transform:scaleX(1.2199)">(</div><div class=t style="left:691.90px;top:1298.66px;font-size:16.0px;color:#000;transform:scaleX(1.1248)">/</div><div class=t style="left:776.90px;top:1298.66px;font-size:16.0px;color:#000;transform:scaleX(1.2199)">)</div><svg class=r style='left:333.40px;top:1317.50px;overflow:visible' width='320.0' height='16' fill='#000'><use href='#g7' transform='translate(0.00,0) scale(0.01600)'/><use href='#g39' transform='translate(16.00,0) scale(0.01600)'/><use href='#g40' transform='translate(32.00,0) scale(0.01600)'/><use href='#g0' transform='translate(48.00,0) scale(0.01600)'/><use href='#g1' transform='translate(64.00,0) scale(0.01600)'/><use href='#g2' transform='translate(80.00,0) scale(0.01600)'/><use href='#g41' transform='translate(96.00,0) scale(0.01600)'/><use href='#g42' transform='translate(112.00,0) scale(0.01600)'/><use href='#g43' transform='translate(128.00,0) scale(0.01600)'/><use href='#g44' transform='translate(144.00,0) scale(0.01600)'/><use href='#g45' transform='translate(160.00,0) scale(0.01600)'/><use href='#g1' transform='translate(176.00,0) scale(0.01600)'/><use href='#g2' transform='translate(192.00,0) scale(0.01600)'/><use href='#g46' transform='translate(208.00,0) scale(0.01600)'/><use href='#g29' transform='translate(224.00,0) scale(0.01600)'/><use href='#g47' transform='translate(240.00,0) scale(0.01600)'/><use href='#g48' transform='translate(256.00,0) scale(0.01600)'/><use href='#g49' transform='translate(272.00,0) scale(0.01600)'/><use href='#g50' transform='translate(288.00,0) scale(0.01600)'/><use href='#g26' transform='translate(304.00,0) scale(0.01600)'/></svg></div><div style='position:absolute;left:0;top:0;z-index:7'><div class=r style='left:1275px;top:0px;width:1468px;height:1366px;background:#fff;'></div><svg class=r style='left:1286px;top:1px' width='24' height='24' viewBox='0 0 24 24'>
<defs><linearGradient id='sh' x1='0' y1='0' x2='0.3' y2='1'><stop offset='0' stop-color='#2a7ae8'/><stop offset='1' stop-color='#0a3a9a'/></linearGradient></defs>
<path d='M1 23 Q3 8 23 1 Q17 10 22 23 Z' fill='url(#sh)'/></svg><div class=t style="left:1315.59px;top:4.34px;font-size:19.6px;color:#7c7c7c;transform:scaleX(0.9843);">*Ethernet0</div><svg class=r style='left:1290.70px;top:45.30px;overflow:visible' width='49.0' height='23.5' fill='#7d7d7d'><use href='#g51' transform='translate(0.00,0) scale(0.02350)'/><use href='#g52' transform='translate(24.50,0) scale(0.02350)'/></svg><div class=t style="left:1339.39px;top:44.55px;font-size:25px;color:#7d7d7d;transform:scaleX(0.9091);">(F)</div><svg class=r style='left:1399.90px;top:45.30px;overflow:visible' width='49.0' height='23.5' fill='#7d7d7d'><use href='#g53' transform='translate(0.00,0) scale(0.02350)'/><use href='#g54' transform='translate(24.50,0) scale(0.02350)'/></svg><div class=t style="left:1448.59px;top:44.55px;font-size:25px;color:#7d7d7d;transform:scaleX(0.9065);">(E)</div><svg class=r style='left:1510.50px;top:45.30px;overflow:visible' width='49.0' height='23.5' fill='#7d7d7d'><use href='#g55' transform='translate(0.00,0) scale(0.02350)'/><use href='#g56' transform='translate(24.50,0) scale(0.02350)'/></svg><div class=t style="left:1559.08px;top:44.55px;font-size:25px;color:#7d7d7d;transform:scaleX(0.9826);">(V)</div><svg class=r style='left:1624.00px;top:45.30px;overflow:visible' width='49.0' height='23.5' fill='#7d7d7d'><use href='#g57' transform='translate(0.00,0) scale(0.02350)'/><use href='#g58' transform='translate(24.50,0) scale(0.02350)'/></svg><div class=t style="left:1672.64px;top:44.55px;font-size:25px;color:#7d7d7d;transform:scaleX(0.9425);">(G)</div><svg class=r style='left:1738.90px;top:45.30px;overflow:visible' width='49.0' height='23.5' fill='#7d7d7d'><use href='#g59' transform='translate(0.00,0) scale(0.02350)'/><use href='#g60' transform='translate(24.50,0) scale(0.02350)'/></svg><div class=t style="left:1787.54px;top:44.55px;font-size:25px;color:#7d7d7d;transform:scaleX(0.9398);">(C)</div><svg class=r style='left:1852.40px;top:45.30px;overflow:visible' width='49.0' height='23.5' fill='#7d7d7d'><use href='#g61' transform='translate(0.00,0) scale(0.02350)'/><use href='#g62' transform='translate(24.50,0) scale(0.02350)'/></svg><div class=t style="left:1900.98px;top:44.55px;font-size:25px;color:#7d7d7d;transform:scaleX(0.9826);">(A)</div><svg class=r style='left:1965.80px;top:45.30px;overflow:visible' width='49.0' height='23.5' fill='#7d7d7d'><use href='#g63' transform='translate(0.00,0) scale(0.02350)'/><use href='#g64' transform='translate(24.50,0) scale(0.02350)'/></svg><div class=t style="left:2014.49px;top:44.55px;font-size:25px;color:#7d7d7d;transform:scaleX(0.9065);">(S)</div><svg class=r style='left:2077.10px;top:45.30px;overflow:visible' width='49.0' height='23.5' fill='#7d7d7d'><use href='#g65' transform='translate(0.00,0) scale(0.02350)'/><use href='#g66' transform='translate(24.50,0) scale(0.02350)'/></svg><div class=t style="left:2125.76px;top:44.55px;font-size:25px;color:#7d7d7d;transform:scaleX(0.9264);">(Y)</div><svg class=r style='left:2188.10px;top:45.30px;overflow:visible' width='49.0' height='23.5' fill='#7d7d7d'><use href='#g67' transform='translate(0.00,0) scale(0.02350)'/><use href='#g68' transform='translate(24.50,0) scale(0.02350)'/></svg><div class=t style="left:2236.58px;top:44.55px;font-size:25px;color:#7d7d7d;transform:scaleX(1.0418);">(W)</div><svg class=r style='left:2310.70px;top:45.30px;overflow:visible' width='49.0' height='23.5' fill='#7d7d7d'><use href='#g69' transform='translate(0.00,0) scale(0.02350)'/><use href='#g70' transform='translate(24.50,0) scale(0.02350)'/></svg><div class=t style="left:2359.34px;top:44.55px;font-size:25px;color:#7d7d7d;transform:scaleX(0.9438);">(T)</div><svg class=r style='left:2420.30px;top:45.30px;overflow:visible' width='49.0' height='23.5' fill='#7d7d7d'><use href='#g71' transform='translate(0.00,0) scale(0.02350)'/><use href='#g72' transform='translate(24.50,0) scale(0.02350)'/></svg><div class=t style="left:2468.79px;top:44.55px;font-size:25px;color:#7d7d7d;transform:scaleX(1.0410);">(H)</div><div class=r style='left:1275px;top:79px;width:1468px;height:1px;background:#e8e8e8;'></div><div class=r style='left:1275px;top:80px;width:1468px;height:49px;background:#f0f0f0;'></div><div class=r style='left:1275px;top:129px;width:1468px;height:1.5px;background:#a8a8a8;'></div><div class=r style='left:1275px;top:130.5px;width:1468px;height:1.5px;background:#ffffff;'></div><div class=r style='left:1275px;top:132px;width:1468px;height:48px;background:#f0f0f0;'></div><svg class=r style='left:1286px;top:90px' width='30' height='32' viewBox='0 0 30 32'>
<defs><linearGradient id='sf' x1='0' y1='0' x2='0' y2='1'><stop offset='0' stop-color='#5060d0'/><stop offset='1' stop-color='#2030b0'/></linearGradient></defs>
<path d='M1 31 Q4 9 29 1 Q22 14 28 31 Z' fill='#fff' stroke='#909090' stroke-width='1'/>
<path d='M4 29 Q7 12 25 4 Q19 16 25 29 Z' fill='url(#sf)'/></svg><svg class=r style='left:1333px;top:92px' width='28' height='28'><rect x='0.5' y='0.5' width='27' height='27' fill='#fff' stroke='#bdbdbd'/><rect x='3.5' y='3.5' width='21' height='21' fill='#8a8a8a'/></svg><svg class=r style='left:1378px;top:90px' width='30' height='32' viewBox='0 0 30 32'>
<path d='M1 31 Q4 9 29 1 Q22 14 28 31 Z' fill='#fff' stroke='#b0b0b0' stroke-width='1'/>
<path d='M4 29 Q7 12 25 4 Q19 16 25 29 Z' fill='#a8a8a8'/>
<circle cx='16' cy='21' r='5' fill='none' stroke='#fff' stroke-width='2.5'/></svg><svg class=r style='left:1423px;top:90px' width='32' height='32' viewBox='0 0 32 32'>
<circle cx='16' cy='16' r='15' fill='#fff' stroke='#555' stroke-width='1.2'/>
<circle cx='16' cy='16' r='12' fill='#333'/>
<circle cx='16' cy='16' r='8.5' fill='#fff'/>
<circle cx='16' cy='16' r='5.5' fill='#1a1a1a'/>
<g stroke='#fff' stroke-width='2.4'><path d='M16 6 V9 M16 23 V26 M6 16 H9 M23 16 H26 M9 9 L11 11 M21 21 L23 23 M9 23 L11 21 M21 11 L23 9'/></g></svg><div class=r style='left:1466px;top:90px;width:2px;height:32px;background:#cfcfcf;'></div><svg class=r style='left:1485px;top:92px' width='20' height='30' viewBox='0 0 20 30'>
<path d='M1 1 L17 1 L17 22 L19 27 L8 27 L8 30 L1 25 Z' fill='#f7d878'/><path d='M1 1 L8 5 L8 30 L1 25 Z' fill='#fce8a8'/></svg><svg class=r style='left:1529px;top:90px' width='29' height='32' viewBox='0 0 29 32'>
<path d='M1 1 L20 1 L28 9 L28 31 L1 31 Z' fill='#fbf8e6' stroke='#808080' stroke-width='1.5'/>
<path d='M2 2 L19 2 L22 6 L2 6 Z' fill='#3aa0e8'/>
<text x='6' y='15' font-size='6.5' font-family='Liberation Mono' fill='#666'>0101</text>
<text x='6' y='22' font-size='6.5' font-family='Liberation Mono' fill='#666'>0110</text>
<text x='6' y='29' font-size='6.5' font-family='Liberation Mono' fill='#666'>0111</text></svg><svg class=r style='left:1575px;top:90px' width='29' height='32' viewBox='0 0 29 32'>
<path d='M1 1 L20 1 L28 9 L28 31 L1 31 Z' fill='#fbf8e6' stroke='#808080' stroke-width='1.5'/>
<path d='M2 2 L19 2 L22 6 L2 6 Z' fill='#3aa0e8'/>
<text x='6' y='15' font-size='6.5' font-family='Liberation Mono' fill='#666'>0101</text>
<text x='6' y='22' font-size='6.5' font-family='Liberation Mono' fill='#666'>0110</text>
<text x='6' y='29' font-size='6.5' font-family='Liberation Mono' fill='#666'>0111</text><path d='M3 5 L25 28 M25 5 L3 28' stroke='#2a2a2a' stroke-width='3.5'/></svg><svg class=r style='left:1621px;top:90px' width='29' height='32' viewBox='0 0 29 32'>
<path d='M1 1 L20 1 L28 9 L28 31 L1 31 Z' fill='#fbf8e6' stroke='#808080' stroke-width='1.5'/>
<path d='M2 2 L19 2 L22 6 L2 6 Z' fill='#3aa0e8'/>
<text x='6' y='15' font-size='6.5' font-family='Liberation Mono' fill='#666'>0101</text>
<text x='6' y='22' font-size='6.5' font-family='Liberation Mono' fill='#666'>0110</text>
<text x='6' y='29' font-size='6.5' font-family='Liberation Mono' fill='#666'>0111</text><path d='M20 10 A9 9 0 1 0 22 22' fill='none' stroke='#1f5aa8' stroke-width='4'/><path d='M15 4 L25 10 L17 15 Z' fill='#1f5aa8'/></svg><div class=r style='left:1662px;top:90px;width:2px;height:32px;background:#cfcfcf;'></div><svg class=r style='left:1682px;top:92px' width='22' height='28' viewBox='0 0 22 28'>
<circle cx='9' cy='9' r='7.5' fill='#c8c8c8' stroke='#000' stroke-width='2.2'/><path d='M13 15 L19 25' stroke='#000' stroke-width='4' stroke-linecap='round'/></svg><svg class=r style='left:1725px;top:96px' width='28' height='20' viewBox='0 0 28 20'><g transform='rotate(0 14 10)'>
<path d='M1 10 L12 1 L12 6 L27 6 L27 14 L12 14 L12 19 Z' fill='#fff' stroke='#8a8a8a' stroke-width='1.3'/>
<path d='M4 10 L11 4.5 L11 8 L24 8 L24 12 L11 12 L11 15.5 Z' fill='#5cb81e'/></g></svg><svg class=r style='left:1771px;top:96px' width='28' height='20' viewBox='0 0 28 20'><g transform='rotate(180 14 10)'>
<path d='M1 10 L12 1 L12 6 L27 6 L27 14 L12 14 L12 19 Z' fill='#fff' stroke='#8a8a8a' stroke-width='1.3'/>
<path d='M4 10 L11 4.5 L11 8 L24 8 L24 12 L11 12 L11 15.5 Z' fill='#5cb81e'/></g></svg><svg class=r style='left:1814px;top:89px' width='34' height='33' viewBox='0 0 34 33'>
<g fill='#1a1e22'><rect x='5.2' y='5' width='27.6' height='2.2'/><rect x='5.2' y='17.2' width='27.6' height='2.2'/><rect x='5.2' y='23.2' width='27.6' height='2.2'/><rect x='5.2' y='29.1' width='27.6' height='2.2'/></g>
<rect x='26.9' y='8.9' width='5.9' height='6' fill='#f8e040'/>
<path d='M1.4 7.4 L14.7 7.4 L14.7 2.6 L28.3 12.4 L14.7 22.4 L14.7 18.2 L1.4 18.2 Z' fill='#fff' stroke='#8a8a85' stroke-width='1.6' stroke-linejoin='round'/>
<path d='M5.2 10.6 L17 10.6 L17 7.9 L24.1 12.4 L17 17 L17 14.4 L5.2 14.4 Z' fill='#62b81a'/></svg><svg class=r style='left:1863px;top:90px' width='28' height='30' viewBox='0 0 28 30'>
<rect x='0' y='0' width='28' height='2' fill='#444'/>
<path d='M14 4 L25 15 L18 15 L18 29 L10 29 L10 15 L3 15 Z' fill='#fff' stroke='#8a8a8a' stroke-width='1.3'/>
<path d='M14 7 L21 13.5 L16 13.5 L16 27 L12 27 L12 13.5 L7 13.5 Z' fill='#5cb81e'/></svg><svg class=r style='left:1909px;top:91px' width='28' height='30' viewBox='0 0 28 30'>
<rect x='0' y='28' width='28' height='2' fill='#444'/>
<path d='M14 26 L25 15 L18 15 L18 1 L10 1 L10 15 L3 15 Z' fill='#fff' stroke='#8a8a8a' stroke-width='1.3'/>
<path d='M14 23 L21 16.5 L16 16.5 L16 3 L12 3 L12 16.5 L7 16.5 Z' fill='#5cb81e'/></svg><div class=r style='left:1947px;top:84px;width:46px;height:43px;background:#c4ddf3;box-sizing:border-box;border:1px solid #99c8ef'></div><svg class=r style='left:1957px;top:94px' width='29' height='28' viewBox='0 0 29 28'>
<rect x='0' y='0' width='28' height='2' fill='#1e1e1e'/><rect x='0' y='6' width='28' height='2' fill='#b8b8b0'/><rect x='0' y='12' width='28' height='2' fill='#b8b8b0'/><rect x='0' y='18' width='28' height='2' fill='#b8b8b0'/><rect x='0' y='26' width='28' height='2' fill='#1e1e1e'/>
<path d='M12 19 Q20 17 28 19 L21 27 Z' fill='#3468b0'/></svg><div class=r style='left:1996px;top:90px;width:2px;height:32px;background:#cfcfcf;'></div><div class=r style='left:2005px;top:84px;width:46px;height:43px;background:#c4ddf3;box-sizing:border-box;border:1px solid #99c8ef'></div><svg class=r style='left:2015px;top:94px' width='28' height='28' viewBox='0 0 28 28'>
<rect x='0' y='0' width='28' height='2' fill='#1e1e1e'/><rect x='0' y='6' width='28' height='2' fill='#e02020'/><rect x='0' y='12' width='28' height='2' fill='#2050b0'/><rect x='0' y='18' width='28' height='2' fill='#6a3a8a'/><rect x='0' y='24' width='28' height='2' fill='#1e1e1e'/></svg><div class=r style='left:2054px;top:90px;width:2px;height:32px;background:#cfcfcf;'></div><svg class=r style='left:2071px;top:92px' width='29' height='28' viewBox='0 0 29 28'>
<circle cx='11' cy='11' r='10' fill='#d0d0d0' stroke='#000' stroke-width='2.3'/><path d='M5.5 11 H16.5 M11 5.5 V16.5' stroke='#000' stroke-width='2.3'/><path d='M18 18 L26 26' stroke='#000' stroke-width='4.5' stroke-linecap='round'/></svg><svg class=r style='left:2117px;top:92px' width='29' height='28' viewBox='0 0 29 28'>
<circle cx='11' cy='11' r='10' fill='#d0d0d0' stroke='#000' stroke-width='2.3'/><path d='M5.5 11 H16.5' stroke='#000' stroke-width='2.3'/><path d='M18 18 L26 26' stroke='#000' stroke-width='4.5' stroke-linecap='round'/></svg><svg class=r style='left:2163px;top:92px' width='29' height='28' viewBox='0 0 29 28'>
<circle cx='11' cy='11' r='10' fill='#d0d0d0' stroke='#000' stroke-width='2.3'/><path d='M6 8.5 H16 M6 13.5 H16' stroke='#000' stroke-width='2.3'/><path d='M18 18 L26 26' stroke='#000' stroke-width='4.5' stroke-linecap='round'/></svg><svg class=r style='left:2209px;top:92px' width='29' height='28' viewBox='0 0 29 28'>
<rect x='0' y='0' width='28' height='2' fill='#1e1e1e'/><rect x='0' y='26' width='28' height='2' fill='#1e1e1e'/>
<g fill='#b8b8b0'><rect x='0' y='6' width='28' height='2'/><rect x='0' y='12' width='28' height='2'/><rect x='0' y='18' width='28' height='2'/></g>
<rect x='8' y='0' width='2' height='28' fill='#909090'/><rect x='19' y='0' width='2' height='28' fill='#909090'/>
<path d='M2 4 Q7 8 2 17 Z' fill='#3468b0'/><path d='M26 4 Q21 8 26 17 Z' fill='#3468b0'/></svg><div class=r style='left:1279px;top:138px;width:1470px;height:36px;background:#b0ffb0;box-sizing:border-box;border:2px solid #646464;border-radius:5px'></div><div class=r style='left:1281px;top:140px;width:34px;height:32px;background:#fff;border-radius:3px 0 0 3px'></div><div class=r style='left:1314px;top:140px;width:2px;height:32px;background:#5a5a5a;'></div><svg class=r style='left:1289px;top:142px' width='17' height='28' viewBox='0 0 17 28'>
<defs><linearGradient id='bm' x1='0' y1='0' x2='0' y2='1'><stop offset='0' stop-color='#8ab0dc'/><stop offset='1' stop-color='#6a98d0'/></linearGradient></defs>
<path d='M1 2 Q1 0 3 0 L14 0 Q16 0 16 2 L16 28 L8.5 21 L1 28 Z' fill='url(#bm)'/></svg><div class=t style="left:1323.61px;top:149.04px;font-size:21px;font-family:'Liberation Mono';transform:scaleX(0.9470);">icmp</div><div class=r style='left:1275px;top:177px;width:1468px;height:1.5px;background:#a8a8a8;'></div><div class=r style='left:1275px;top:178.5px;width:1468px;height:1.5px;background:#ffffff;'></div><div class=r style='left:1275px;top:180px;width:1468px;height:1px;background:#6f7585;'></div><div class=r style='left:1275px;top:180px;width:1px;height:437px;background:#6f7585;'></div><div class=r style='left:1428px;top:182px;width:1px;height:40px;background:#e5e5e5;'></div><div class=r style='left:1658px;top:182px;width:1px;height:40px;background:#e5e5e5;'></div><div class=r style='left:2004px;top:182px;width:1px;height:40px;background:#e5e5e5;'></div><div class=r style='left:2350px;top:182px;width:1px;height:40px;background:#e5e5e5;'></div><div class=r style='left:2482px;top:182px;width:1px;height:40px;background:#e5e5e5;'></div><div class=r style='left:2580px;top:182px;width:1px;height:40px;background:#e5e5e5;'></div><div class=t style="left:1283.24px;top:193.52px;font-size:23px;font-family:'Liberation Mono';transform:scaleX(0.8590);">No.</div><div class=t style="left:1436.95px;top:193.52px;font-size:23px;font-family:'Liberation Mono';transform:scaleX(0.8819);">Time</div><div class=t style="left:1666.42px;top:193.52px;font-size:23px;font-family:'Liberation Mono';transform:scaleX(0.8780);">Source</div><div class=t style="left:2011.59px;top:193.52px;font-size:23px;font-family:'Liberation Mono';transform:scaleX(0.8866);">Destination</div><div class=t style="left:2357.41px;top:193.52px;font-size:23px;font-family:'Liberation Mono';transform:scaleX(0.8721);">Protocol</div><div class=t style="left:2488.99px;top:193.52px;font-size:23px;font-family:'Liberation Mono';transform:scaleX(0.9062);">Length</div><div class=t style="left:2589.10px;top:193.52px;font-size:23px;font-family:'Liberation Mono';transform:scaleX(0.8823);">Info</div><svg class=r style='left:2171px;top:182px' width='13' height='8'><path d='M0.5 7.5 L6.5 1.5 L12.5 7.5' fill='none' stroke='#606060' stroke-width='1.3'/></svg><div class=c style='left:1277px;top:222px;width:1466px;height:368px'><div style='position:absolute;left:-1277px;top:-222px'><div class=r style='left:1277px;top:222px;width:1466px;height:40px;background:#12272e;'></div><div class=t style="left:1406.50px;top:229.47px;font-size:28.333px;letter-spacing:-0.5026px;font-family:'Liberation Mono';color:#b7f774">4</div><div class=t style="left:1435.50px;top:229.47px;font-size:28.333px;letter-spacing:-0.5026px;font-family:'Liberation Mono';color:#b7f774">0.856855</div><div class=t style="left:1665.00px;top:229.47px;font-size:28.333px;letter-spacing:-0.5026px;font-family:'Liberation Mono';color:#b7f774">192.168.28.2</div><div class=t style="left:2010.50px;top:229.47px;font-size:28.333px;letter-spacing:-0.5026px;font-family:'Liberation Mono';color:#b7f774">192.168.28.128</div><div class=t style="left:2357.00px;top:229.47px;font-size:28.333px;letter-spacing:-0.5026px;font-family:'Liberation Mono';color:#b7f774">ICMP</div><div class=t style="left:2526.50px;top:229.47px;font-size:28.333px;letter-spacing:-0.5026px;font-family:'Liberation Mono';color:#b7f774">138</div><div class=t style="left:2586.50px;top:229.47px;font-size:28.333px;letter-spacing:-0.5026px;font-family:'Liberation Mono';color:#b7f774">Destination unreachable</div><div class=r style='left:1277px;top:262px;width:1466px;height:40px;background:#12272e;'></div><div class=t style="left:1390.00px;top:269.47px;font-size:28.333px;letter-spacing:-0.5026px;font-family:'Liberation Mono';color:#b7f774">11</div><div class=t style="left:1435.50px;top:269.47px;font-size:28.333px;letter-spacing:-0.5026px;font-family:'Liberation Mono';color:#b7f774">2.359684</div><div class=t style="left:1665.00px;top:269.47px;font-size:28.333px;letter-spacing:-0.5026px;font-family:'Liberation Mono';color:#b7f774">192.168.28.2</div><div class=t style="left:2010.50px;top:269.47px;font-size:28.333px;letter-spacing:-0.5026px;font-family:'Liberation Mono';color:#b7f774">192.168.28.128</div><div class=t style="left:2357.00px;top:269.47px;font-size:28.333px;letter-spacing:-0.5026px;font-family:'Liberation Mono';color:#b7f774">ICMP</div><div class=t style="left:2526.50px;top:269.47px;font-size:28.333px;letter-spacing:-0.5026px;font-family:'Liberation Mono';color:#b7f774">138</div><div class=t style="left:2586.50px;top:269.47px;font-size:28.333px;letter-spacing:-0.5026px;font-family:'Liberation Mono';color:#b7f774">Destination unreachable</div><div class=r style='left:1277px;top:302px;width:1466px;height:40px;background:#12272e;'></div><div class=t style="left:1390.00px;top:309.47px;font-size:28.333px;letter-spacing:-0.5026px;font-family:'Liberation Mono';color:#b7f774">17</div><div class=t style="left:1435.50px;top:309.47px;font-size:28.333px;letter-spacing:-0.5026px;font-family:'Liberation Mono';color:#b7f774">3.860158</div><div class=t style="left:1665.00px;top:309.47px;font-size:28.333px;letter-spacing:-0.5026px;font-family:'Liberation Mono';color:#b7f774">192.168.28.2</div><div class=t style="left:2010.50px;top:309.47px;font-size:28.333px;letter-spacing:-0.5026px;font-family:'Liberation Mono';color:#b7f774">192.168.28.128</div><div class=t style="left:2357.00px;top:309.47px;font-size:28.333px;letter-spacing:-0.5026px;font-family:'Liberation Mono';color:#b7f774">ICMP</div><div class=t style="left:2526.50px;top:309.47px;font-size:28.333px;letter-spacing:-0.5026px;font-family:'Liberation Mono';color:#b7f774">138</div><div class=t style="left:2586.50px;top:309.47px;font-size:28.333px;letter-spacing:-0.5026px;font-family:'Liberation Mono';color:#b7f774">Destination unreachable</div><div class=r style='left:1277px;top:342px;width:1466px;height:40px;background:#fae1fc;'></div><div class=t style="left:1390.00px;top:349.47px;font-size:28.333px;letter-spacing:-0.5026px;font-family:'Liberation Mono';color:#12272e">27</div><div class=t style="left:1435.50px;top:349.47px;font-size:28.333px;letter-spacing:-0.5026px;font-family:'Liberation Mono';color:#12272e">4.833979</div><div class=t style="left:1665.00px;top:349.47px;font-size:28.333px;letter-spacing:-0.5026px;font-family:'Liberation Mono';color:#12272e">72.246.163.233</div><div class=t style="left:2010.50px;top:349.47px;font-size:28.333px;letter-spacing:-0.5026px;font-family:'Liberation Mono';color:#12272e">192.168.28.128</div><div class=t style="left:2357.00px;top:349.47px;font-size:28.333px;letter-spacing:-0.5026px;font-family:'Liberation Mono';color:#12272e">ICMP</div><div class=t style="left:2510.00px;top:349.47px;font-size:28.333px;letter-spacing:-0.5026px;font-family:'Liberation Mono';color:#12272e">1424</div><div class=t style="left:2586.50px;top:349.47px;font-size:28.333px;letter-spacing:-0.5026px;font-family:'Liberation Mono';color:#12272e">Echo (ping) request</div><div class=r style='left:1277px;top:382px;width:1466px;height:40px;background:#d6bfd7;'></div><div class=t style="left:1390.00px;top:389.47px;font-size:28.333px;letter-spacing:-0.5026px;font-family:'Liberation Mono';color:#12272e">32</div><div class=t style="left:1435.50px;top:389.47px;font-size:28.333px;letter-spacing:-0.5026px;font-family:'Liberation Mono';color:#12272e">5.851637</div><div class=t style="left:1665.00px;top:389.47px;font-size:28.333px;letter-spacing:-0.5026px;font-family:'Liberation Mono';color:#12272e">72.246.163.233</div><div class=t style="left:2010.50px;top:389.47px;font-size:28.333px;letter-spacing:-0.5026px;font-family:'Liberation Mono';color:#12272e">192.168.28.128</div><div class=t style="left:2357.00px;top:389.47px;font-size:28.333px;letter-spacing:-0.5026px;font-family:'Liberation Mono';color:#12272e">ICMP</div><div class=t style="left:2510.00px;top:389.47px;font-size:28.333px;letter-spacing:-0.5026px;font-family:'Liberation Mono';color:#12272e">1424</div><div class=t style="left:2586.50px;top:389.47px;font-size:28.333px;letter-spacing:-0.5026px;font-family:'Liberation Mono';color:#12272e">Echo (ping) request</div><div class=r style='left:1277px;top:422px;width:1466px;height:40px;background:#fae1fc;'></div><div class=t style="left:1390.00px;top:429.47px;font-size:28.333px;letter-spacing:-0.5026px;font-family:'Liberation Mono';color:#12272e">40</div><div class=t style="left:1435.50px;top:429.47px;font-size:28.333px;letter-spacing:-0.5026px;font-family:'Liberation Mono';color:#12272e">6.776981</div><div class=t style="left:1665.00px;top:429.47px;font-size:28.333px;letter-spacing:-0.5026px;font-family:'Liberation Mono';color:#12272e">72.246.163.233</div><div class=t style="left:2010.50px;top:429.47px;font-size:28.333px;letter-spacing:-0.5026px;font-family:'Liberation Mono';color:#12272e">192.168.28.128</div><div class=t style="left:2357.00px;top:429.47px;font-size:28.333px;letter-spacing:-0.5026px;font-family:'Liberation Mono';color:#12272e">ICMP</div><div class=t style="left:2510.00px;top:429.47px;font-size:28.333px;letter-spacing:-0.5026px;font-family:'Liberation Mono';color:#12272e">1424</div><div class=t style="left:2586.50px;top:429.47px;font-size:28.333px;letter-spacing:-0.5026px;font-family:'Liberation Mono';color:#12272e">Echo (ping) request</div><div class=r style='left:1277px;top:462px;width:1466px;height:40px;background:#fae1fc;'></div><div class=t style="left:1390.00px;top:469.47px;font-size:28.333px;letter-spacing:-0.5026px;font-family:'Liberation Mono';color:#12272e">46</div><div class=t style="left:1435.50px;top:469.47px;font-size:28.333px;letter-spacing:-0.5026px;font-family:'Liberation Mono';color:#12272e">7.785691</div><div class=t style="left:1665.00px;top:469.47px;font-size:28.333px;letter-spacing:-0.5026px;font-family:'Liberation Mono';color:#12272e">72.246.163.233</div><div class=t style="left:2010.50px;top:469.47px;font-size:28.333px;letter-spacing:-0.5026px;font-family:'Liberation Mono';color:#12272e">192.168.28.128</div><div class=t style="left:2357.00px;top:469.47px;font-size:28.333px;letter-spacing:-0.5026px;font-family:'Liberation Mono';color:#12272e">ICMP</div><div class=t style="left:2510.00px;top:469.47px;font-size:28.333px;letter-spacing:-0.5026px;font-family:'Liberation Mono';color:#12272e">1424</div><div class=t style="left:2586.50px;top:469.47px;font-size:28.333px;letter-spacing:-0.5026px;font-family:'Liberation Mono';color:#12272e">Echo (ping) request</div><div class=r style='left:1277px;top:502px;width:1466px;height:40px;background:#fae1fc;'></div><div class=t style="left:1406.50px;top:509.47px;font-size:28.333px;letter-spacing:-0.5026px;font-family:'Liberation Mono';color:#12272e">3</div><div class=t style="left:1435.50px;top:509.47px;font-size:28.333px;letter-spacing:-0.5026px;font-family:'Liberation Mono';color:#12272e">0.193331</div><div class=t style="left:1665.00px;top:509.47px;font-size:28.333px;letter-spacing:-0.5026px;font-family:'Liberation Mono';color:#12272e">72.246.163.233</div><div class=t style="left:2010.50px;top:509.47px;font-size:28.333px;letter-spacing:-0.5026px;font-family:'Liberation Mono';color:#12272e">192.168.28.150</div><div class=t style="left:2357.00px;top:509.47px;font-size:28.333px;letter-spacing:-0.5026px;font-family:'Liberation Mono';color:#12272e">ICMP</div><div class=t style="left:2510.00px;top:509.47px;font-size:28.333px;letter-spacing:-0.5026px;font-family:'Liberation Mono';color:#12272e">1424</div><div class=t style="left:2586.50px;top:509.47px;font-size:28.333px;letter-spacing:-0.5026px;font-family:'Liberation Mono';color:#12272e">Echo (ping) request</div><div class=r style='left:1277px;top:542px;width:1466px;height:40px;background:#fae1fc;'></div><div class=t style="left:1406.50px;top:549.47px;font-size:28.333px;letter-spacing:-0.5026px;font-family:'Liberation Mono';color:#12272e">7</div><div class=t style="left:1435.50px;top:549.47px;font-size:28.333px;letter-spacing:-0.5026px;font-family:'Liberation Mono';color:#12272e">1.203164</div><div class=t style="left:1665.00px;top:549.47px;font-size:28.333px;letter-spacing:-0.5026px;font-family:'Liberation Mono';color:#12272e">72.246.163.233</div><div class=t style="left:2010.50px;top:549.47px;font-size:28.333px;letter-spacing:-0.5026px;font-family:'Liberation Mono';color:#12272e">192.168.28.150</div><div class=t style="left:2357.00px;top:549.47px;font-size:28.333px;letter-spacing:-0.5026px;font-family:'Liberation Mono';color:#12272e">ICMP</div><div class=t style="left:2510.00px;top:549.47px;font-size:28.333px;letter-spacing:-0.5026px;font-family:'Liberation Mono';color:#12272e">1424</div><div class=t style="left:2586.50px;top:549.47px;font-size:28.333px;letter-spacing:-0.5026px;font-family:'Liberation Mono';color:#12272e">Echo (ping) request</div><div class=r style='left:1277px;top:582px;width:1466px;height:40px;background:#fae1fc;'></div><div class=t style="left:1406.50px;top:589.47px;font-size:28.333px;letter-spacing:-0.5026px;font-family:'Liberation Mono';color:#12272e">9</div><div class=t style="left:1435.50px;top:589.47px;font-size:28.333px;letter-spacing:-0.5026px;font-family:'Liberation Mono';color:#12272e">1.983164</div><div class=t style="left:1665.00px;top:589.47px;font-size:28.333px;letter-spacing:-0.5026px;font-family:'Liberation Mono';color:#12272e">72.246.163.233</div><div class=t style="left:2010.50px;top:589.47px;font-size:28.333px;letter-spacing:-0.5026px;font-family:'Liberation Mono';color:#12272e">192.168.28.150</div><div class=t style="left:2357.00px;top:589.47px;font-size:28.333px;letter-spacing:-0.5026px;font-family:'Liberation Mono';color:#12272e">ICMP</div><div class=t style="left:2510.00px;top:589.47px;font-size:28.333px;letter-spacing:-0.5026px;font-family:'Liberation Mono';color:#12272e">1424</div><div class=t style="left:2586.50px;top:589.47px;font-size:28.333px;letter-spacing:-0.5026px;font-family:'Liberation Mono';color:#12272e">Echo (ping) request</div><div class=r style='left:1295px;top:342px;width:2px;height:141px;background:#879090;'></div><div class=r style='left:1295px;top:481px;width:18px;height:2px;background:#879090;'></div><div class=r style='left:1290px;top:402px;width:23px;height:2px;background:#879090;'></div><svg class=r style='left:1279px;top:397px' width='13' height='12'><path d='M0 6 L12 0.5 L12 11.5 Z' fill='#879090'/></svg></div></div><div class=r style='left:1277px;top:590.5px;width:1466px;height:24.5px;background:#f0f0f0;'></div><div class=r style='left:1303px;top:590.5px;width:1440px;height:24px;background:#cdcdcd;'></div><svg class=r style='left:1284px;top:597.0px' width='11' height='12'><path d='M9 0.5 L3 6 L9 11.5' fill='none' stroke='#505050' stroke-width='3.2' stroke-linejoin='miter'/></svg><div class=r style='left:1275px;top:617px;width:1468px;height:1px;background:#6f7585;'></div><div class=r style='left:1275px;top:618px;width:1468px;height:10px;background:#f0f0f0;'></div><div class=r style='left:1275px;top:628px;width:1468px;height:1px;background:#6f7585;'></div><div class=r style='left:1275px;top:628px;width:1px;height:504px;background:#6f7585;'></div><div class=r style='left:1317px;top:631px;width:1426px;height:39px;background:#efefef;'></div><svg class=r style='left:1289px;top:645px' width='15' height='10'><path d='M1.5 1.5 L7.5 7.5 L13.5 1.5' fill='none' stroke='#3a3a3a' stroke-width='2.6'/></svg><svg class=r style='left:1332px;top:684px' width='10' height='14'><path d='M1.5 1.5 L7.5 7 L1.5 12.5' fill='none' stroke='#a0a0a0' stroke-width='2.4'/></svg><div class=c style='left:1277px;top:628px;width:1466px;height:477px'><div style='position:absolute;left:-1277px;top:-628px'><div class=t style="left:1323px;top:639.17px;font-size:28.333px;letter-spacing:-0.5026px;font-family:'Liberation Mono'">Frame 32: 1424 bytes on wire (11392 bits), 1424 bytes captured (11392 bits) on interface \Device\NPF_{37533DAD-78FA-4A42-896C-8F2F4EE6623F}, id 0</div><div class=t style="left:1362.5px;top:679.17px;font-size:28.333px;letter-spacing:-0.5026px;font-family:'Liberation Mono'">Interface id: 0 (\Device\NPF_{37533DAD-78FA-4A42-896C-8F2F4EE6623F})</div><div class=t style="left:1362.5px;top:719.17px;font-size:28.333px;letter-spacing:-0.5026px;font-family:'Liberation Mono'">Encapsulation type: Ethernet (1)</div><div class=t style="left:1362.5px;top:759.17px;font-size:28.333px;letter-spacing:-0.5026px;font-family:'Liberation Mono'">Arrival Time: Jul  7, 2022 08:42:03.689705000</div><div class=t style="left:1362.5px;top:799.17px;font-size:28.333px;letter-spacing:-0.5026px;font-family:'Liberation Mono'">[Time shift for this packet: 0.000000000 seconds]</div><div class=t style="left:1362.5px;top:839.17px;font-size:28.333px;letter-spacing:-0.5026px;font-family:'Liberation Mono'">Epoch Time: 1657154523.689705000 seconds</div><div class=t style="left:1362.5px;top:879.17px;font-size:28.333px;letter-spacing:-0.5026px;font-family:'Liberation Mono'">[Time delta from previous captured frame: 0.278656000 seconds]</div><div class=t style="left:1362.5px;top:919.17px;font-size:28.333px;letter-spacing:-0.5026px;font-family:'Liberation Mono'">[Time delta from previous displayed frame: 0.278656000 seconds]</div><div class=t style="left:1362.5px;top:959.17px;font-size:28.333px;letter-spacing:-0.5026px;font-family:'Liberation Mono'">[Time since reference or first frame: 5.851637000 seconds]</div><div class=t style="left:1362.5px;top:999.17px;font-size:28.333px;letter-spacing:-0.5026px;font-family:'Liberation Mono'">Frame Number: 32</div><div class=t style="left:1362.5px;top:1039.17px;font-size:28.333px;letter-spacing:-0.5026px;font-family:'Liberation Mono'">Frame Length: 1424 bytes (11392 bits)</div><div class=t style="left:1362.5px;top:1079.17px;font-size:28.333px;letter-spacing:-0.5026px;font-family:'Liberation Mono'">Capture Length: 1424 bytes (11392 bits)</div></div></div><div class=r style='left:1277px;top:1105px;width:1466px;height:24.5px;background:#f0f0f0;'></div><div class=r style='left:1303px;top:1105px;width:1440px;height:24px;background:#cdcdcd;'></div><svg class=r style='left:1284px;top:1111.5px' width='11' height='12'><path d='M9 0.5 L3 6 L9 11.5' fill='none' stroke='#505050' stroke-width='3.2' stroke-linejoin='miter'/></svg><div class=r style='left:1275px;top:1131px;width:1468px;height:1px;background:#6f7585;'></div><div class=r style='left:1275px;top:1132px;width:1468px;height:10px;background:#f0f0f0;'></div><div class=r style='left:1275px;top:1142px;width:1468px;height:1px;background:#6f7585;'></div><div class=r style='left:1275px;top:1142px;width:1px;height:224px;background:#6f7585;'></div><div class=r style='left:1277px;top:1144px;width:98px;height:222px;background:#f0f0f0;'></div><div class=c style='left:1277px;top:1143px;width:1466px;height:223px'><div style='position:absolute;left:-1277px;top:-1143px'><div class=r style='left:1900px;top:1216px;width:286px;height:36px;background:#efefef;'></div><div class=r style='left:1391px;top:1252px;width:795px;height:120px;background:#efefef;'></div><div class=r style='left:2412px;top:1216px;width:104px;height:36px;background:#efefef;'></div><div class=r style='left:2232px;top:1252px;width:284px;height:120px;background:#efefef;'></div><div class=t style="left:1292px;top:1150.47px;font-size:28.333px;letter-spacing:-0.5026px;font-family:'Liberation Mono';color:#a0a0a0">0000</div><div class=t style="left:1391px;top:1150.47px;font-size:28.333px;letter-spacing:-0.5026px;font-family:'Liberation Mono'">00 0c 29 f9 08 0d 00 50  56 ed a5 c0 08 00 45 00</div><div class=t style="left:2231.5px;top:1150.47px;font-size:28.333px;letter-spacing:-0.5026px;font-family:'Liberation Mono'"><span style='color:#a0a0a0'>·</span><span style='color:#a0a0a0'>·</span>)<span style='color:#a0a0a0'>·</span><span style='color:#a0a0a0'>·</span><span style='color:#a0a0a0'>·</span><span style='color:#a0a0a0'>·</span>P V<span style='color:#a0a0a0'>·</span><span style='color:#a0a0a0'>·</span><span style='color:#a0a0a0'>·</span><span style='color:#a0a0a0'>·</span><span style='color:#a0a0a0'>·</span>E<span style='color:#a0a0a0'>·</span></div><div class=t style="left:1292px;top:1186.47px;font-size:28.333px;letter-spacing:-0.5026px;font-family:'Liberation Mono';color:#a0a0a0">0010</div><div class=t style="left:1391px;top:1186.47px;font-size:28.333px;letter-spacing:-0.5026px;font-family:'Liberation Mono'">05 82 17 b5 00 00 80 01  53 be 48 f6 a3 e9 c0 a8</div><div class=t style="left:2231.5px;top:1186.47px;font-size:28.333px;letter-spacing:-0.5026px;font-family:'Liberation Mono'"><span style='color:#a0a0a0'>·</span><span style='color:#a0a0a0'>·</span><span style='color:#a0a0a0'>·</span><span style='color:#a0a0a0'>·</span><span style='color:#a0a0a0'>·</span><span style='color:#a0a0a0'>·</span><span style='color:#a0a0a0'>·</span><span style='color:#a0a0a0'>·</span> S<span style='color:#a0a0a0'>·</span>H<span style='color:#a0a0a0'>·</span><span style='color:#a0a0a0'>·</span><span style='color:#a0a0a0'>·</span><span style='color:#a0a0a0'>·</span><span style='color:#a0a0a0'>·</span></div><div class=t style="left:1292px;top:1222.47px;font-size:28.333px;letter-spacing:-0.5026px;font-family:'Liberation Mono';color:#505050">0020</div><div class=t style="left:1391px;top:1222.47px;font-size:28.333px;letter-spacing:-0.5026px;font-family:'Liberation Mono'">1c 80 00 00 62 52 00 01  00 0e 61 62 63 64 65 66</div><div class=t style="left:2231.5px;top:1222.47px;font-size:28.333px;letter-spacing:-0.5026px;font-family:'Liberation Mono'"><span style='color:#a0a0a0'>·</span><span style='color:#a0a0a0'>·</span><span style='color:#a0a0a0'>·</span><span style='color:#a0a0a0'>·</span>bR<span style='color:#a0a0a0'>·</span><span style='color:#a0a0a0'>·</span> <span style='color:#a0a0a0'>·</span><span style='color:#a0a0a0'>·</span>abcdef</div><div class=t style="left:1292px;top:1258.47px;font-size:28.333px;letter-spacing:-0.5026px;font-family:'Liberation Mono';color:#505050">0030</div><div class=t style="left:1391px;top:1258.47px;font-size:28.333px;letter-spacing:-0.5026px;font-family:'Liberation Mono'">67 68 69 6a 6b 6c 6d 6e  6f 70 71 72 73 74 75 76</div><div class=t style="left:2231.5px;top:1258.47px;font-size:28.333px;letter-spacing:-0.5026px;font-family:'Liberation Mono'">ghijklmn opqrstuv</div><div class=t style="left:1292px;top:1294.47px;font-size:28.333px;letter-spacing:-0.5026px;font-family:'Liberation Mono';color:#505050">0040</div><div class=t style="left:1391px;top:1294.47px;font-size:28.333px;letter-spacing:-0.5026px;font-family:'Liberation Mono'">77 61 62 63 64 65 66 67  68 69 6a 6b 6c 6d 6e 6f</div><div class=t style="left:2231.5px;top:1294.47px;font-size:28.333px;letter-spacing:-0.5026px;font-family:'Liberation Mono'">wabcdefg hijklmno</div><div class=t style="left:1292px;top:1330.47px;font-size:28.333px;letter-spacing:-0.5026px;font-family:'Liberation Mono';color:#505050">0050</div><div class=t style="left:1391px;top:1330.47px;font-size:28.333px;letter-spacing:-0.5026px;font-family:'Liberation Mono'">70 71 72 73 74 75 76 77  61 62 63 64 65 66 67 68</div><div class=t style="left:2231.5px;top:1330.47px;font-size:28.333px;letter-spacing:-0.5026px;font-family:'Liberation Mono'">pqrstuvw abcdefgh</div><div class=t style="left:1292px;top:1366.47px;font-size:28.333px;letter-spacing:-0.5026px;font-family:'Liberation Mono';color:#505050">0060</div><div class=t style="left:1391px;top:1366.47px;font-size:28.333px;letter-spacing:-0.5026px;font-family:'Liberation Mono'">69 6a 6b 6c 6d 6e 6f 70  71 72 73 74 75 76 77 61</div><div class=t style="left:2231.5px;top:1366.47px;font-size:28.333px;letter-spacing:-0.5026px;font-family:'Liberation Mono'">ijklmnop qrstuvwa</div></div></div></div><div style='position:absolute;left:0;top:0;z-index:9'><div class=r style='left:75px;top:414px;width:1170px;height:43px;box-sizing:border-box;border:5px solid #ec1c24;border-radius:3px'></div><div class=r style='left:1025px;top:409px;width:68px;height:50px;box-sizing:border-box;border:5px solid #ec1c24;border-radius:3px'></div><div class=r style='left:311px;top:625px;width:179px;height:38px;box-sizing:border-box;border:5px solid #ec1c24;border-radius:3px'></div><div class=r style='left:318px;top:809px;width:570px;height:51px;box-sizing:border-box;border:5px solid #ec1c24;border-radius:3px'></div><div class=r style='left:1374px;top:380px;width:1367px;height:46px;box-sizing:border-box;border:5px solid #ec1c24;border-radius:3px'></div><div class=r style='left:1357px;top:750px;width:763px;height:39px;box-sizing:border-box;border:5px solid #ec1c24;border-radius:3px'></div><svg class=r style='left:0;top:0' width='2743' height='1366'><line x1='234' y1='349' x2='194.7' y2='393.3' stroke='#ec1c24' stroke-width='5.8' stroke-linecap='round'/><polygon points='182.1,407.5 191.0,379.3 197.4,390.3 209.0,395.3' fill='#ec1c24'/><line x1='1122' y1='336.8' x2='1089.1' y2='389.7' stroke='#ec1c24' stroke-width='5.8' stroke-linecap='round'/><polygon points='1079.1,405.8 1083.2,376.5 1091.2,386.3 1103.5,389.2' fill='#ec1c24'/><line x1='768.1' y1='729.8' x2='720.3' y2='787.2' stroke='#ec1c24' stroke-width='5.8' stroke-linecap='round'/><polygon points='708.1,801.8 716.2,773.4 722.8,784.1 734.6,788.7' fill='#ec1c24'/><line x1='2013.7' y1='665.6' x2='1965.7' y2='726.7' stroke='#ec1c24' stroke-width='5.8' stroke-linecap='round'/><polygon points='1954,741.6 1961.2,713.0 1968.2,723.5 1980.1,727.8' fill='#ec1c24'/></svg></div></body></html>
